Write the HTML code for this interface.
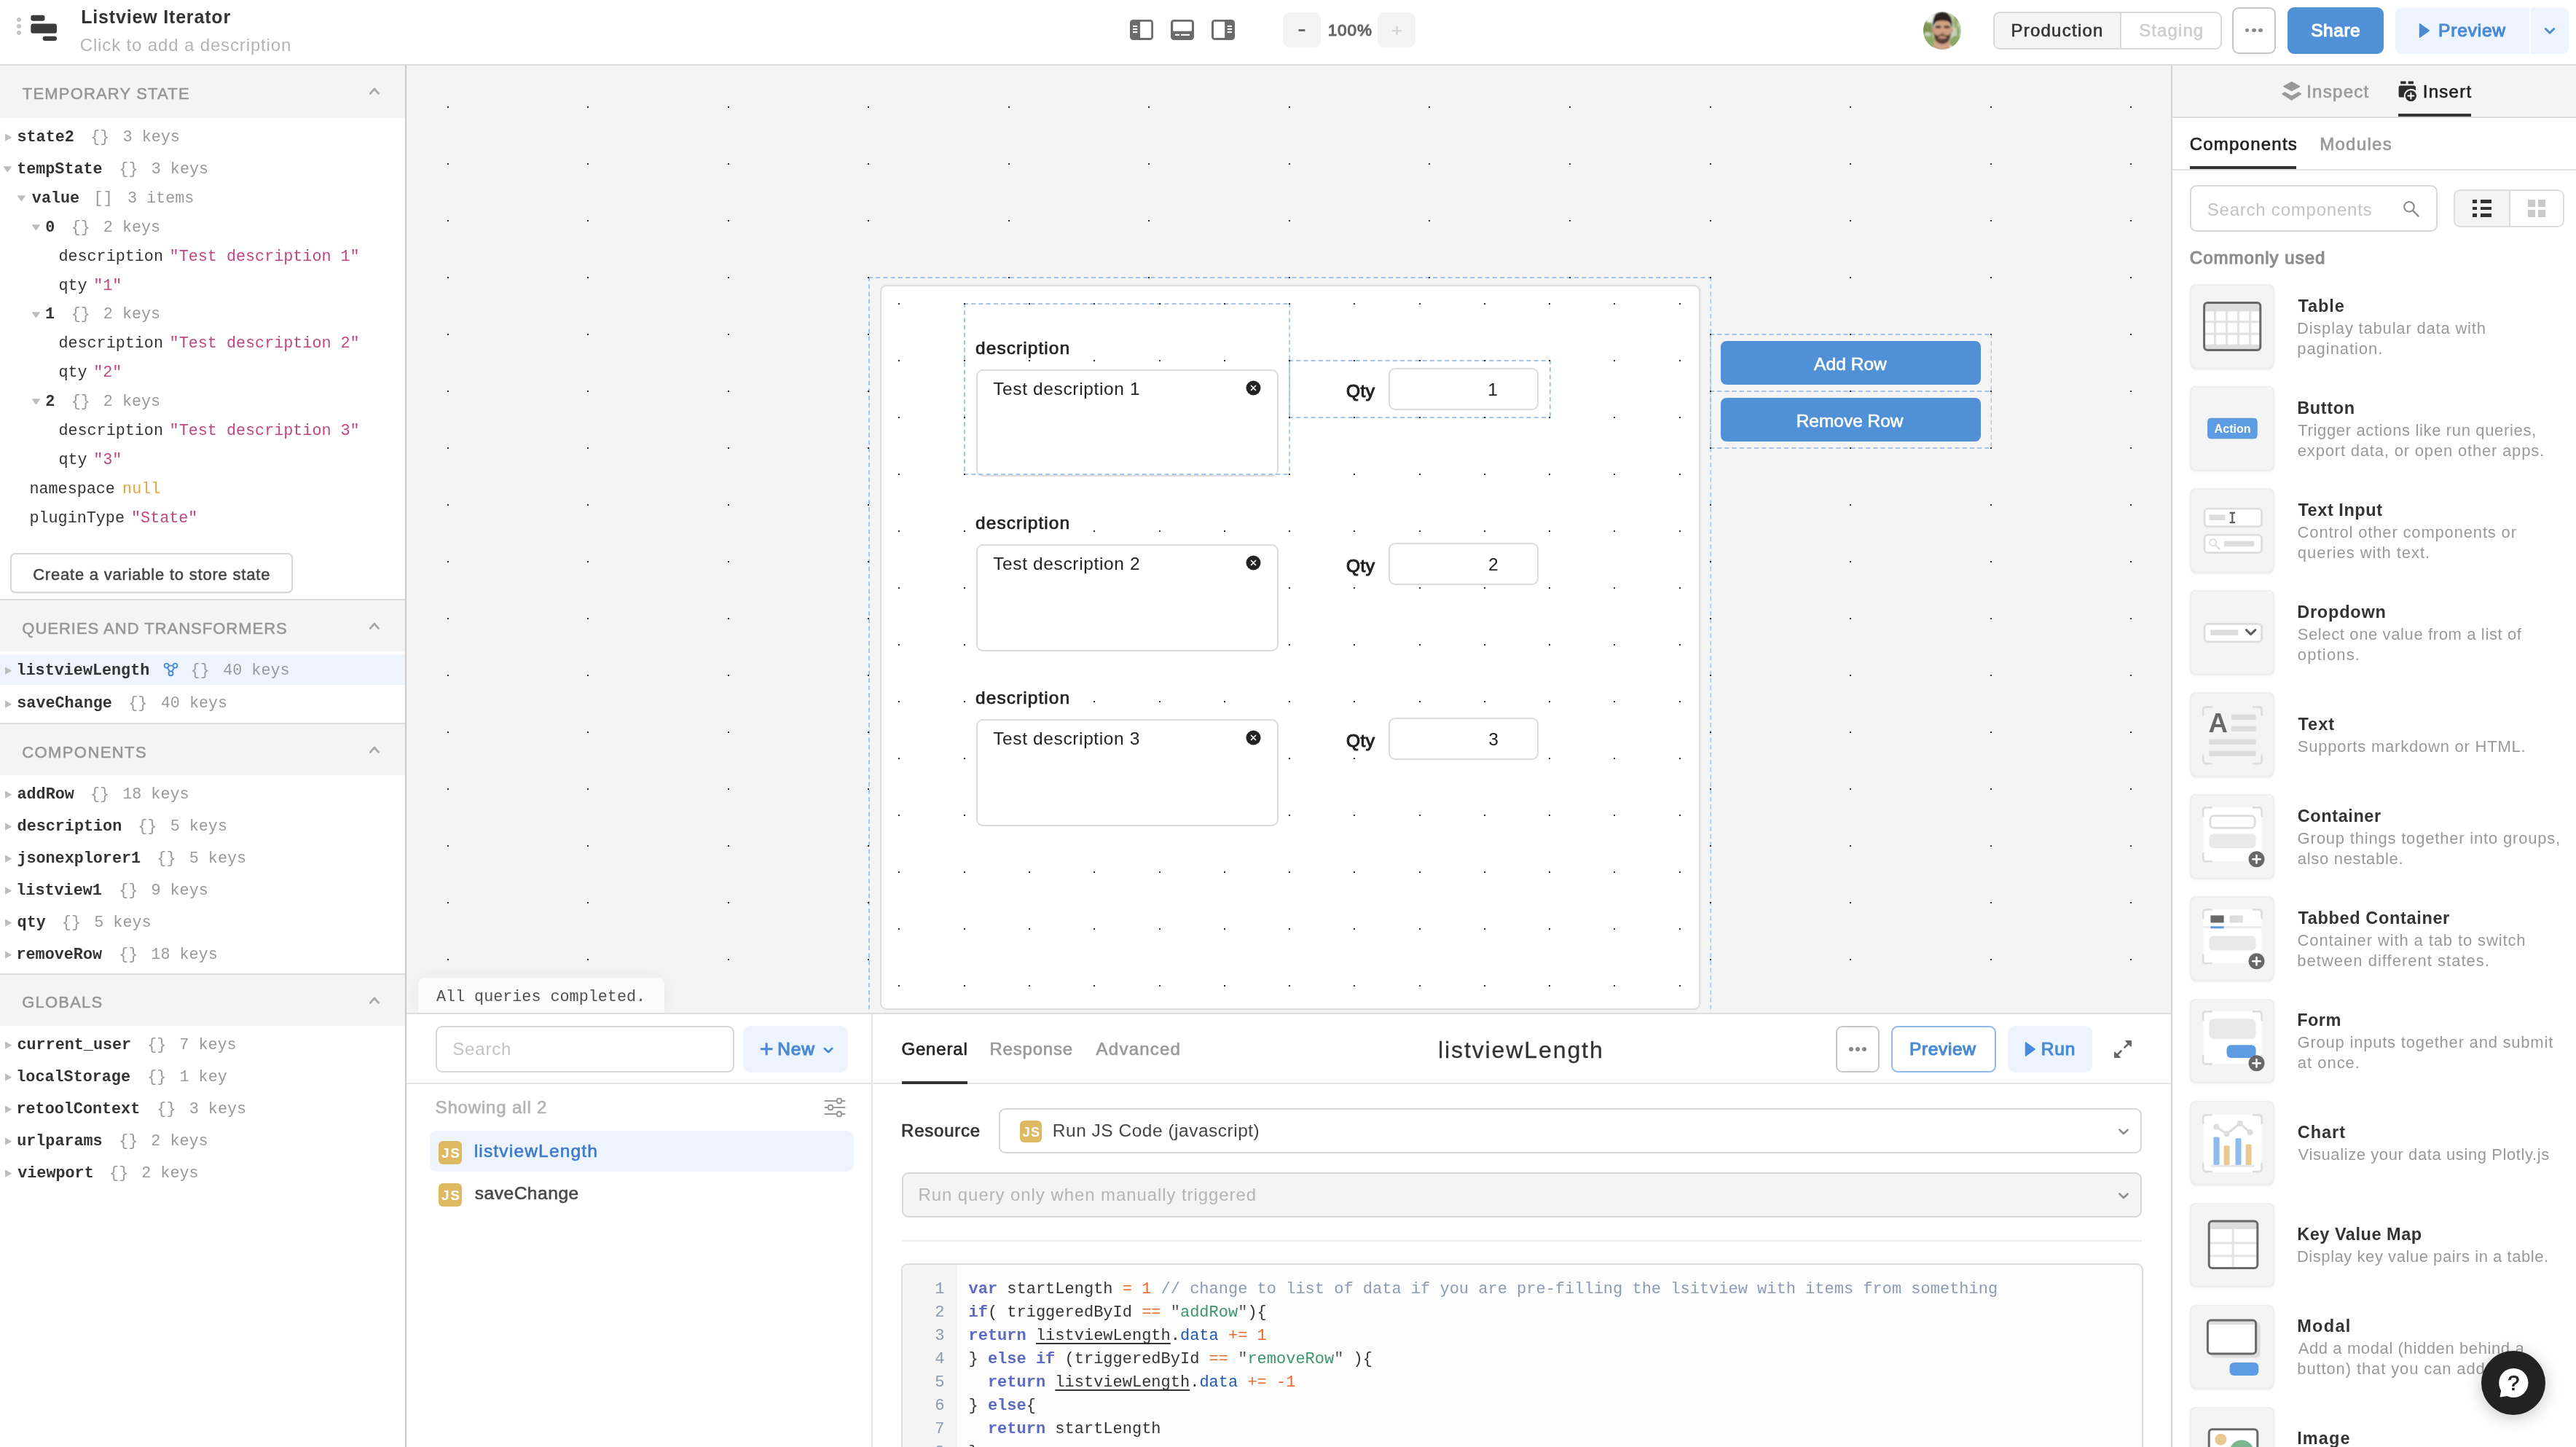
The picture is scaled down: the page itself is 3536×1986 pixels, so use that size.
<!DOCTYPE html>
<html lang="en"><head><meta charset="utf-8"><title>Listview Iterator</title><style>html,body{margin:0;padding:0;background:#fff}
body{width:3536px;height:1986px;overflow:hidden;position:relative;will-change:transform;font-family:"Liberation Sans",sans-serif}
.b{position:absolute;display:block;box-sizing:content-box}
.t{position:absolute;white-space:pre;display:block}
.s{font-family:"Liberation Sans",sans-serif}
.m{font-family:"Liberation Mono",monospace}
div.b{box-sizing:border-box}
</style></head><body>
<div class="b" style="left:0px;top:0px;width:3536px;height:88px;background:#fff;"></div>
<div class="b" style="left:0px;top:88px;width:3536px;height:2px;background:#dcdcdc;"></div>
<div class="b" style="left:558px;top:90px;width:2422px;height:1300px;background:#f4f4f4;"></div>
<div class="b" style="left:0px;top:90px;width:556px;height:1896px;background:#fff;"></div>
<div class="b" style="left:556px;top:90px;width:2px;height:1896px;background:#c9c9c9;"></div>
<div class="b" style="left:2982px;top:90px;width:554px;height:1896px;background:#fff;"></div>
<div class="b" style="left:2980px;top:90px;width:2px;height:1896px;background:#d2d2d2;"></div>
<div class="b" style="left:22.8px;top:24px;width:6px;height:6px;background:#c4c4c4;border-radius:3px;"></div>
<div class="b" style="left:22.8px;top:33px;width:6px;height:6px;background:#c4c4c4;border-radius:3px;"></div>
<div class="b" style="left:22.8px;top:41.6px;width:6px;height:6px;background:#c4c4c4;border-radius:3px;"></div>
<svg class="b" style="left:40px;top:18px;" width="42" height="40" viewBox="0 0 42 40"><rect x="2.3" y="2.7" width="19.2" height="8" rx="3.2" fill="#3c3c3c"/><rect x="2.3" y="14.4" width="35.7" height="13.4" rx="3.4" fill="#3c3c3c"/><rect x="18.7" y="31.8" width="19.3" height="6.1" rx="3" fill="#3c3c3c"/></svg>
<span class="t s" style="left:111.17px;top:8.70px;font-size:25px;line-height:28px;color:#333;font-weight:700;letter-spacing:0.828px;">Listview Iterator</span>
<span class="t s" style="left:109.70px;top:48.00px;font-size:24px;line-height:27px;color:#b4b4b4;letter-spacing:0.862px;">Click to add a description</span>
<svg class="b" style="left:1551px;top:27px;" width="32" height="28" viewBox="0 0 32 28"><rect width="32" height="28" rx="4.5" fill="#6b6b6b"/><rect x="14" y="2.7" width="15.2" height="22.4" rx="1" fill="#fff"/><rect x="4" y="8" width="6.2" height="2.1" fill="#fff"/><rect x="4" y="12" width="6.2" height="2.1" fill="#fff"/><rect x="4" y="16" width="6.2" height="2.1" fill="#fff"/></svg>
<svg class="b" style="left:1607px;top:27px;" width="32" height="28" viewBox="0 0 32 28"><rect width="32" height="28" rx="4.5" fill="#6b6b6b"/><rect x="3.2" y="2.7" width="25.7" height="13" rx="1" fill="#fff"/><rect x="6" y="19.8" width="6" height="2.1" fill="#fff"/><rect x="14" y="19.8" width="12" height="2.1" fill="#fff"/></svg>
<svg class="b" style="left:1663px;top:27px;" width="32" height="28" viewBox="0 0 32 28"><rect width="32" height="28" rx="4.5" fill="#6b6b6b"/><rect x="3" y="2.7" width="15.2" height="22.4" rx="1" fill="#fff"/><rect x="21.8" y="8" width="6.2" height="2.1" fill="#fff"/><rect x="21.8" y="12" width="6.2" height="2.1" fill="#fff"/><rect x="21.8" y="16" width="6.2" height="2.1" fill="#fff"/></svg>
<div class="b" style="left:1761px;top:17px;width:52px;height:48px;background:#f4f4f4;border-radius:9px;"></div>
<div class="b" style="left:1891px;top:17px;width:52px;height:48px;background:#f4f4f4;border-radius:9px;"></div>
<span class="t s" style="left:1780.88px;top:17.50px;font-size:36px;line-height:41px;color:#666;">-</span>
<span class="t s" style="left:1822.66px;top:28.50px;font-size:22.5px;line-height:25px;color:#666;letter-spacing:0.925px;-webkit-text-stroke:1.1px #666;">100%</span>
<span class="t s" style="left:1910.15px;top:27.65px;font-size:24.5px;line-height:27px;color:#d4d4d4;-webkit-text-stroke:0.5px #d4d4d4;">+</span>
<svg class="b" style="left:2640px;top:16px;" width="52" height="52" viewBox="0 0 52 52"><defs><clipPath id="av"><circle cx="26" cy="26" r="26"/></clipPath><filter id="bl" x="-10%" y="-10%" width="120%" height="120%"><feGaussianBlur stdDeviation="0.85"/></filter></defs><g clip-path="url(#av)"><rect width="52" height="52" fill="#e3e9dc"/><g filter="url(#bl)"><path d="M-3 13 Q6 9 12 16 L15 54 L-3 54Z" fill="#8ba35f"/><ellipse cx="5" cy="24" rx="8" ry="7" fill="#7c9552"/><ellipse cx="6" cy="31" rx="5" ry="3" fill="#c9d3bd"/><ellipse cx="9" cy="9" rx="7" ry="6" fill="#f1f4ee"/><ellipse cx="8" cy="42" rx="10" ry="8" fill="#93aa68"/><path d="M36 2 Q48 6 53 20 L53 54 L36 54Z" fill="#c5d2b1"/><ellipse cx="46" cy="43" rx="10" ry="10" fill="#8aa565"/><ellipse cx="44.5" cy="14" rx="3.6" ry="9" fill="#9bb074"/><ellipse cx="48" cy="27" rx="2" ry="7" fill="#8aa565"/><path d="M16 38 L36 38 L38.5 53 L12.5 53Z" fill="#d3a386"/><path d="M36.4 45.5 L43 50 L43 53 L37.6 53Z" fill="#f4f4f4"/><ellipse cx="26.2" cy="27" rx="12.3" ry="16.6" fill="#cf9f83"/><ellipse cx="13.5" cy="25.6" rx="1.6" ry="3.2" fill="#c79176"/><ellipse cx="39" cy="25.6" rx="1.6" ry="3.2" fill="#c79176"/><path d="M13.4 23 Q11.4 6 20 2 Q27 -1.2 33 2.4 Q41.2 7 39.2 23 Q37.6 15.4 33.5 13.2 Q26 11 18.5 13.6 Q14.6 16 13.4 23Z" fill="#2a211d"/><path d="M14.6 28.6 Q17 33 20.4 32.4 Q26.2 30 32 32.4 Q35.6 33 37.7 28.6 Q38.2 38 32.6 42.6 Q26.2 46.6 19.8 42.6 Q14.2 38 14.6 28.6Z" fill="#4b362c" opacity="0.9"/><ellipse cx="26.2" cy="35.2" rx="5.6" ry="2.3" fill="#bd8a76"/><ellipse cx="20.5" cy="21" rx="4.3" ry="1.8" fill="#4a3228"/><ellipse cx="32.5" cy="21" rx="4.3" ry="1.8" fill="#4a3228"/><ellipse cx="26.4" cy="29.7" rx="2.7" ry="1.2" fill="#a77560"/></g></g></svg>
<div class="b" style="left:2736px;top:16px;width:314px;height:52px;background:#fff;border:2px solid #d9d9d9;border-radius:9px;"></div>
<div class="b" style="left:2738px;top:18px;width:173px;height:48px;background:#f4f4f4;border-radius:7px;border-radius:7px 0 0 7px;"></div>
<div class="b" style="left:2910px;top:18px;width:2px;height:48px;background:#d9d9d9;"></div>
<span class="t s" style="left:2760.38px;top:28.00px;font-size:24px;line-height:27px;color:#333;letter-spacing:1.260px;-webkit-text-stroke:0.6px #333;">Production</span>
<span class="t s" style="left:2936.22px;top:28.00px;font-size:24px;line-height:27px;color:#cdcdcd;letter-spacing:1.093px;-webkit-text-stroke:0.6px #cdcdcd;">Staging</span>
<div class="b" style="left:3064px;top:10px;width:60px;height:64px;background:#fff;border:2px solid #c6c6c6;border-radius:9px;"></div>
<div class="b" style="left:3081.8999999999996px;top:38.900000000000006px;width:5.6px;height:5.6px;background:#8a8a8a;border-radius:3px;"></div>
<div class="b" style="left:3091.1px;top:38.900000000000006px;width:5.6px;height:5.6px;background:#8a8a8a;border-radius:3px;"></div>
<div class="b" style="left:3100.3999999999996px;top:38.900000000000006px;width:5.6px;height:5.6px;background:#8a8a8a;border-radius:3px;"></div>
<div class="b" style="left:3140px;top:10px;width:132px;height:64px;background:#5090d7;border-radius:9px;"></div>
<span class="t s" style="left:3172.27px;top:28.00px;font-size:24.5px;line-height:27px;color:#fff;letter-spacing:0.510px;-webkit-text-stroke:1.15px #fff;">Share</span>
<div class="b" style="left:3288px;top:10px;width:184px;height:64px;background:#eef4fd;border-radius:9px 0 0 9px;"></div>
<div class="b" style="left:3474px;top:10px;width:52px;height:64px;background:#eef4fd;border-radius:0 9px 9px 0;"></div>
<svg class="b" style="left:3320px;top:31px;" width="16" height="22" viewBox="0 0 16 22"><path d="M2 1.2 L14.6 10.3 Q15.6 11 14.6 11.7 L2 20.8 Q0.8 21.4 0.8 20 V2 Q0.8 0.6 2 1.2Z" fill="#4a8ad4"/></svg>
<span class="t s" style="left:3347.11px;top:28.00px;font-size:24.5px;line-height:27px;color:#4a8ad4;letter-spacing:0.798px;-webkit-text-stroke:1.15px #4a8ad4;">Preview</span>
<svg class="b" style="left:3491px;top:36.6px;" width="18" height="12" viewBox="0 0 18 12"><path d="M3.2 2.6 L9 8.2 L14.8 2.6" fill="none" stroke="#4a8ad4" stroke-width="2.8" stroke-linecap="round" stroke-linejoin="round"/></svg>
<div class="b" style="left:0px;top:90px;width:556px;height:72px;background:#f4f4f4;"></div>
<span class="t s" style="left:30.83px;top:115.80px;font-size:22px;line-height:25px;color:#969696;letter-spacing:1.176px;-webkit-text-stroke:0.55px #969696;">TEMPORARY STATE</span>
<svg class="b" style="left:504px;top:118.3px;" width="20" height="14" viewBox="0 0 20 14"><path d="M4.3 10.4 L9.9 4 L15.5 10.4" fill="none" stroke="#a6a6a6" stroke-width="2.7" stroke-linecap="round" stroke-linejoin="round"/></svg>
<svg class="b" style="left:6.0px;top:182.20000000000002px;" width="12.1" height="13.2" viewBox="0 0 12.1 13.2"><path d="M1.6 1.7 L8.4 5.4 Q9.2 6 8.4 6.6 L1.6 10.3 Q0.9 10.6 0.9 9.8 V2.2 Q0.9 1.4 1.6 1.7Z" fill="#bdbdbd" transform="scale(1.1)"/></svg>
<span class="t m" style="left:23.50px;top:175.80px;font-size:21.75px;line-height:25px;color:#333;font-weight:700;">state2</span>
<span class="t m" style="left:124.21px;top:175.80px;font-size:21.75px;line-height:25px;color:#999;">{}</span>
<span class="t m" style="left:168.59px;top:175.80px;font-size:21.75px;line-height:25px;color:#999;">3 keys</span>
<svg class="b" style="left:4.0px;top:227.4px;" width="13.2" height="11" viewBox="0 0 13.2 11"><path d="M1.4 1.2 H10.2 Q11.2 1.2 10.6 2 L6.4 7.9 Q5.8 8.6 5.2 7.9 L1 2 Q0.4 1.2 1.4 1.2Z" fill="#bdbdbd" transform="scale(1.1)"/></svg>
<span class="t m" style="left:23.17px;top:220.00px;font-size:21.75px;line-height:25px;color:#333;font-weight:700;">tempState</span>
<span class="t m" style="left:163.36px;top:220.00px;font-size:21.75px;line-height:25px;color:#999;">{}</span>
<span class="t m" style="left:207.75px;top:220.00px;font-size:21.75px;line-height:25px;color:#999;">3 keys</span>
<svg class="b" style="left:23.400000000000002px;top:267.28px;" width="13.2" height="11" viewBox="0 0 13.2 11"><path d="M1.4 1.2 H10.2 Q11.2 1.2 10.6 2 L6.4 7.9 Q5.8 8.6 5.2 7.9 L1 2 Q0.4 1.2 1.4 1.2Z" fill="#bdbdbd" transform="scale(1.1)"/></svg>
<span class="t m" style="left:43.87px;top:259.88px;font-size:21.75px;line-height:25px;color:#333;font-weight:700;">value</span>
<span class="t m" style="left:128.60px;top:259.88px;font-size:21.75px;line-height:25px;color:#999;">[]</span>
<span class="t m" style="left:174.94px;top:259.88px;font-size:21.75px;line-height:25px;color:#999;">3 items</span>
<svg class="b" style="left:42.7px;top:307.15999999999997px;" width="13.2" height="11" viewBox="0 0 13.2 11"><path d="M1.4 1.2 H10.2 Q11.2 1.2 10.6 2 L6.4 7.9 Q5.8 8.6 5.2 7.9 L1 2 Q0.4 1.2 1.4 1.2Z" fill="#bdbdbd" transform="scale(1.1)"/></svg>
<span class="t m" style="left:62.30px;top:299.76px;font-size:21.75px;line-height:25px;color:#333;font-weight:700;">0</span>
<span class="t m" style="left:97.66px;top:299.76px;font-size:21.75px;line-height:25px;color:#999;">{}</span>
<span class="t m" style="left:141.83px;top:299.76px;font-size:21.75px;line-height:25px;color:#999;">2 keys</span>
<span class="t m" style="left:80.39px;top:339.64px;font-size:21.75px;line-height:25px;color:#333;">description</span>
<span class="t m" style="left:232.61px;top:339.64px;font-size:21.75px;line-height:25px;color:#bf4682;">"Test description 1"</span>
<span class="t m" style="left:80.39px;top:379.52px;font-size:21.75px;line-height:25px;color:#333;">qty</span>
<span class="t m" style="left:128.21px;top:379.52px;font-size:21.75px;line-height:25px;color:#bf4682;">"1"</span>
<svg class="b" style="left:42.7px;top:426.79999999999995px;" width="13.2" height="11" viewBox="0 0 13.2 11"><path d="M1.4 1.2 H10.2 Q11.2 1.2 10.6 2 L6.4 7.9 Q5.8 8.6 5.2 7.9 L1 2 Q0.4 1.2 1.4 1.2Z" fill="#bdbdbd" transform="scale(1.1)"/></svg>
<span class="t m" style="left:62.09px;top:419.40px;font-size:21.75px;line-height:25px;color:#333;font-weight:700;">1</span>
<span class="t m" style="left:97.66px;top:419.40px;font-size:21.75px;line-height:25px;color:#999;">{}</span>
<span class="t m" style="left:141.83px;top:419.40px;font-size:21.75px;line-height:25px;color:#999;">2 keys</span>
<span class="t m" style="left:80.39px;top:459.28px;font-size:21.75px;line-height:25px;color:#333;">description</span>
<span class="t m" style="left:232.61px;top:459.28px;font-size:21.75px;line-height:25px;color:#bf4682;">"Test description 2"</span>
<span class="t m" style="left:80.39px;top:499.16px;font-size:21.75px;line-height:25px;color:#333;">qty</span>
<span class="t m" style="left:128.21px;top:499.16px;font-size:21.75px;line-height:25px;color:#bf4682;">"2"</span>
<svg class="b" style="left:42.7px;top:546.4399999999999px;" width="13.2" height="11" viewBox="0 0 13.2 11"><path d="M1.4 1.2 H10.2 Q11.2 1.2 10.6 2 L6.4 7.9 Q5.8 8.6 5.2 7.9 L1 2 Q0.4 1.2 1.4 1.2Z" fill="#bdbdbd" transform="scale(1.1)"/></svg>
<span class="t m" style="left:62.20px;top:539.04px;font-size:21.75px;line-height:25px;color:#333;font-weight:700;">2</span>
<span class="t m" style="left:97.66px;top:539.04px;font-size:21.75px;line-height:25px;color:#999;">{}</span>
<span class="t m" style="left:141.83px;top:539.04px;font-size:21.75px;line-height:25px;color:#999;">2 keys</span>
<span class="t m" style="left:80.39px;top:578.92px;font-size:21.75px;line-height:25px;color:#333;">description</span>
<span class="t m" style="left:232.61px;top:578.92px;font-size:21.75px;line-height:25px;color:#bf4682;">"Test description 3"</span>
<span class="t m" style="left:80.39px;top:618.80px;font-size:21.75px;line-height:25px;color:#333;">qty</span>
<span class="t m" style="left:128.21px;top:618.80px;font-size:21.75px;line-height:25px;color:#bf4682;">"3"</span>
<span class="t m" style="left:40.45px;top:658.68px;font-size:21.75px;line-height:25px;color:#333;">namespace</span>
<span class="t m" style="left:168.10px;top:658.68px;font-size:21.75px;line-height:25px;color:#e0a63a;">null</span>
<span class="t m" style="left:40.45px;top:698.56px;font-size:21.75px;line-height:25px;color:#333;">pluginType</span>
<span class="t m" style="left:180.06px;top:698.56px;font-size:21.75px;line-height:25px;color:#bf4682;">"State"</span>
<div class="b" style="left:14px;top:759px;width:388px;height:55px;background:#fff;border:2px solid #d6d6d6;border-radius:7px;box-shadow:0 1px 2px rgba(0,0,0,.06);"></div>
<span class="t s" style="left:45.15px;top:776.30px;font-size:22px;line-height:25px;color:#444;letter-spacing:0.788px;-webkit-text-stroke:0.5px #444;">Create a variable to store state</span>
<div class="b" style="left:0px;top:822px;width:556px;height:2px;background:#dedede;"></div>
<div class="b" style="left:0px;top:824px;width:556px;height:69.5px;background:#f4f4f4;"></div>
<span class="t s" style="left:30.29px;top:850.20px;font-size:22px;line-height:25px;color:#969696;letter-spacing:0.990px;-webkit-text-stroke:0.55px #969696;">QUERIES AND TRANSFORMERS</span>
<svg class="b" style="left:504px;top:852px;" width="20" height="14" viewBox="0 0 20 14"><path d="M4.3 10.4 L9.9 4 L15.5 10.4" fill="none" stroke="#a6a6a6" stroke-width="2.7" stroke-linecap="round" stroke-linejoin="round"/></svg>
<div class="b" style="left:0px;top:898px;width:556px;height:42px;background:#eef4fd;"></div>
<svg class="b" style="left:6.0px;top:914.1px;" width="12.1" height="13.2" viewBox="0 0 12.1 13.2"><path d="M1.6 1.7 L8.4 5.4 Q9.2 6 8.4 6.6 L1.6 10.3 Q0.9 10.6 0.9 9.8 V2.2 Q0.9 1.4 1.6 1.7Z" fill="#bdbdbd" transform="scale(1.1)"/></svg>
<span class="t m" style="left:22.52px;top:907.70px;font-size:21.75px;line-height:25px;color:#333;font-weight:700;">listviewLength</span>
<svg class="b" style="left:224.00000000000003px;top:908.7px;" width="22" height="20" viewBox="0 0 22 20"><g fill="none" stroke="#4a8ad4" stroke-width="1.9"><circle cx="4.6" cy="4.6" r="3"/><circle cx="16.4" cy="4.6" r="3"/><circle cx="10.5" cy="15.2" r="3"/><path d="M7.6 4.6H13.4M5.8 7.4 L9 12.6M15.2 7.4 L12 12.6" /></g></svg>
<span class="t m" style="left:261.61px;top:907.70px;font-size:21.75px;line-height:25px;color:#999;">{}</span>
<span class="t m" style="left:306.21px;top:907.70px;font-size:21.75px;line-height:25px;color:#999;">40 keys</span>
<svg class="b" style="left:5.800000000000001px;top:959.6999999999999px;" width="12.1" height="13.2" viewBox="0 0 12.1 13.2"><path d="M1.6 1.7 L8.4 5.4 Q9.2 6 8.4 6.6 L1.6 10.3 Q0.9 10.6 0.9 9.8 V2.2 Q0.9 1.4 1.6 1.7Z" fill="#bdbdbd" transform="scale(1.1)"/></svg>
<span class="t m" style="left:23.30px;top:953.30px;font-size:21.75px;line-height:25px;color:#333;font-weight:700;">saveChange</span>
<span class="t m" style="left:176.21px;top:953.30px;font-size:21.75px;line-height:25px;color:#999;">{}</span>
<span class="t m" style="left:220.81px;top:953.30px;font-size:21.75px;line-height:25px;color:#999;">40 keys</span>
<div class="b" style="left:0px;top:992px;width:556px;height:2px;background:#dedede;"></div>
<div class="b" style="left:0px;top:994px;width:556px;height:69.5px;background:#f4f4f4;"></div>
<span class="t s" style="left:30.17px;top:1019.70px;font-size:22px;line-height:25px;color:#969696;letter-spacing:1.422px;-webkit-text-stroke:0.55px #969696;">COMPONENTS</span>
<svg class="b" style="left:504px;top:1022px;" width="20" height="14" viewBox="0 0 20 14"><path d="M4.3 10.4 L9.9 4 L15.5 10.4" fill="none" stroke="#a6a6a6" stroke-width="2.7" stroke-linecap="round" stroke-linejoin="round"/></svg>
<svg class="b" style="left:5.800000000000001px;top:1083.9px;" width="12.1" height="13.2" viewBox="0 0 12.1 13.2"><path d="M1.6 1.7 L8.4 5.4 Q9.2 6 8.4 6.6 L1.6 10.3 Q0.9 10.6 0.9 9.8 V2.2 Q0.9 1.4 1.6 1.7Z" fill="#bdbdbd" transform="scale(1.1)"/></svg>
<span class="t m" style="left:23.51px;top:1077.50px;font-size:21.75px;line-height:25px;color:#333;font-weight:700;">addRow</span>
<span class="t m" style="left:124.01px;top:1077.50px;font-size:21.75px;line-height:25px;color:#999;">{}</span>
<span class="t m" style="left:168.18px;top:1077.50px;font-size:21.75px;line-height:25px;color:#999;">18 keys</span>
<svg class="b" style="left:5.800000000000001px;top:1127.98px;" width="12.1" height="13.2" viewBox="0 0 12.1 13.2"><path d="M1.6 1.7 L8.4 5.4 Q9.2 6 8.4 6.6 L1.6 10.3 Q0.9 10.6 0.9 9.8 V2.2 Q0.9 1.4 1.6 1.7Z" fill="#bdbdbd" transform="scale(1.1)"/></svg>
<span class="t m" style="left:23.62px;top:1121.58px;font-size:21.75px;line-height:25px;color:#333;font-weight:700;">description</span>
<span class="t m" style="left:189.26px;top:1121.58px;font-size:21.75px;line-height:25px;color:#999;">{}</span>
<span class="t m" style="left:233.64px;top:1121.58px;font-size:21.75px;line-height:25px;color:#999;">5 keys</span>
<svg class="b" style="left:5.800000000000001px;top:1172.0600000000002px;" width="12.1" height="13.2" viewBox="0 0 12.1 13.2"><path d="M1.6 1.7 L8.4 5.4 Q9.2 6 8.4 6.6 L1.6 10.3 Q0.9 10.6 0.9 9.8 V2.2 Q0.9 1.4 1.6 1.7Z" fill="#bdbdbd" transform="scale(1.1)"/></svg>
<span class="t m" style="left:23.40px;top:1165.66px;font-size:21.75px;line-height:25px;color:#333;font-weight:700;">jsonexplorer1</span>
<span class="t m" style="left:215.36px;top:1165.66px;font-size:21.75px;line-height:25px;color:#999;">{}</span>
<span class="t m" style="left:259.75px;top:1165.66px;font-size:21.75px;line-height:25px;color:#999;">5 keys</span>
<svg class="b" style="left:5.800000000000001px;top:1216.14px;" width="12.1" height="13.2" viewBox="0 0 12.1 13.2"><path d="M1.6 1.7 L8.4 5.4 Q9.2 6 8.4 6.6 L1.6 10.3 Q0.9 10.6 0.9 9.8 V2.2 Q0.9 1.4 1.6 1.7Z" fill="#bdbdbd" transform="scale(1.1)"/></svg>
<span class="t m" style="left:22.32px;top:1209.74px;font-size:21.75px;line-height:25px;color:#333;font-weight:700;">listview1</span>
<span class="t m" style="left:163.16px;top:1209.74px;font-size:21.75px;line-height:25px;color:#999;">{}</span>
<span class="t m" style="left:207.44px;top:1209.74px;font-size:21.75px;line-height:25px;color:#999;">9 keys</span>
<svg class="b" style="left:5.800000000000001px;top:1260.22px;" width="12.1" height="13.2" viewBox="0 0 12.1 13.2"><path d="M1.6 1.7 L8.4 5.4 Q9.2 6 8.4 6.6 L1.6 10.3 Q0.9 10.6 0.9 9.8 V2.2 Q0.9 1.4 1.6 1.7Z" fill="#bdbdbd" transform="scale(1.1)"/></svg>
<span class="t m" style="left:23.62px;top:1253.82px;font-size:21.75px;line-height:25px;color:#333;font-weight:700;">qty</span>
<span class="t m" style="left:84.86px;top:1253.82px;font-size:21.75px;line-height:25px;color:#999;">{}</span>
<span class="t m" style="left:129.25px;top:1253.82px;font-size:21.75px;line-height:25px;color:#999;">5 keys</span>
<svg class="b" style="left:5.800000000000001px;top:1304.3000000000002px;" width="12.1" height="13.2" viewBox="0 0 12.1 13.2"><path d="M1.6 1.7 L8.4 5.4 Q9.2 6 8.4 6.6 L1.6 10.3 Q0.9 10.6 0.9 9.8 V2.2 Q0.9 1.4 1.6 1.7Z" fill="#bdbdbd" transform="scale(1.1)"/></svg>
<span class="t m" style="left:22.53px;top:1297.90px;font-size:21.75px;line-height:25px;color:#333;font-weight:700;">removeRow</span>
<span class="t m" style="left:163.16px;top:1297.90px;font-size:21.75px;line-height:25px;color:#999;">{}</span>
<span class="t m" style="left:207.33px;top:1297.90px;font-size:21.75px;line-height:25px;color:#999;">18 keys</span>
<div class="b" style="left:0px;top:1336px;width:556px;height:2px;background:#dedede;"></div>
<div class="b" style="left:0px;top:1338px;width:556px;height:69.7px;background:#f4f4f4;"></div>
<span class="t s" style="left:30.17px;top:1363.40px;font-size:22px;line-height:25px;color:#969696;letter-spacing:1.217px;-webkit-text-stroke:0.55px #969696;">GLOBALS</span>
<svg class="b" style="left:504px;top:1365.5px;" width="20" height="14" viewBox="0 0 20 14"><path d="M4.3 10.4 L9.9 4 L15.5 10.4" fill="none" stroke="#a6a6a6" stroke-width="2.7" stroke-linecap="round" stroke-linejoin="round"/></svg>
<svg class="b" style="left:5.800000000000001px;top:1428.1000000000001px;" width="12.1" height="13.2" viewBox="0 0 12.1 13.2"><path d="M1.6 1.7 L8.4 5.4 Q9.2 6 8.4 6.6 L1.6 10.3 Q0.9 10.6 0.9 9.8 V2.2 Q0.9 1.4 1.6 1.7Z" fill="#bdbdbd" transform="scale(1.1)"/></svg>
<span class="t m" style="left:23.51px;top:1421.70px;font-size:21.75px;line-height:25px;color:#333;font-weight:700;">current_user</span>
<span class="t m" style="left:202.31px;top:1421.70px;font-size:21.75px;line-height:25px;color:#999;">{}</span>
<span class="t m" style="left:246.37px;top:1421.70px;font-size:21.75px;line-height:25px;color:#999;">7 keys</span>
<svg class="b" style="left:5.800000000000001px;top:1472.1000000000001px;" width="12.1" height="13.2" viewBox="0 0 12.1 13.2"><path d="M1.6 1.7 L8.4 5.4 Q9.2 6 8.4 6.6 L1.6 10.3 Q0.9 10.6 0.9 9.8 V2.2 Q0.9 1.4 1.6 1.7Z" fill="#bdbdbd" transform="scale(1.1)"/></svg>
<span class="t m" style="left:22.32px;top:1465.70px;font-size:21.75px;line-height:25px;color:#333;font-weight:700;">localStorage</span>
<span class="t m" style="left:202.31px;top:1465.70px;font-size:21.75px;line-height:25px;color:#999;">{}</span>
<span class="t m" style="left:246.48px;top:1465.70px;font-size:21.75px;line-height:25px;color:#999;">1 key</span>
<svg class="b" style="left:5.800000000000001px;top:1516.1000000000001px;" width="12.1" height="13.2" viewBox="0 0 12.1 13.2"><path d="M1.6 1.7 L8.4 5.4 Q9.2 6 8.4 6.6 L1.6 10.3 Q0.9 10.6 0.9 9.8 V2.2 Q0.9 1.4 1.6 1.7Z" fill="#bdbdbd" transform="scale(1.1)"/></svg>
<span class="t m" style="left:22.53px;top:1509.70px;font-size:21.75px;line-height:25px;color:#333;font-weight:700;">retoolContext</span>
<span class="t m" style="left:215.36px;top:1509.70px;font-size:21.75px;line-height:25px;color:#999;">{}</span>
<span class="t m" style="left:259.75px;top:1509.70px;font-size:21.75px;line-height:25px;color:#999;">3 keys</span>
<svg class="b" style="left:5.800000000000001px;top:1560.1000000000001px;" width="12.1" height="13.2" viewBox="0 0 12.1 13.2"><path d="M1.6 1.7 L8.4 5.4 Q9.2 6 8.4 6.6 L1.6 10.3 Q0.9 10.6 0.9 9.8 V2.2 Q0.9 1.4 1.6 1.7Z" fill="#bdbdbd" transform="scale(1.1)"/></svg>
<span class="t m" style="left:23.19px;top:1553.70px;font-size:21.75px;line-height:25px;color:#333;font-weight:700;">urlparams</span>
<span class="t m" style="left:163.16px;top:1553.70px;font-size:21.75px;line-height:25px;color:#999;">{}</span>
<span class="t m" style="left:207.33px;top:1553.70px;font-size:21.75px;line-height:25px;color:#999;">2 keys</span>
<svg class="b" style="left:5.800000000000001px;top:1604.1000000000001px;" width="12.1" height="13.2" viewBox="0 0 12.1 13.2"><path d="M1.6 1.7 L8.4 5.4 Q9.2 6 8.4 6.6 L1.6 10.3 Q0.9 10.6 0.9 9.8 V2.2 Q0.9 1.4 1.6 1.7Z" fill="#bdbdbd" transform="scale(1.1)"/></svg>
<span class="t m" style="left:24.27px;top:1597.70px;font-size:21.75px;line-height:25px;color:#333;font-weight:700;">viewport</span>
<span class="t m" style="left:150.11px;top:1597.70px;font-size:21.75px;line-height:25px;color:#999;">{}</span>
<span class="t m" style="left:194.28px;top:1597.70px;font-size:21.75px;line-height:25px;color:#999;">2 keys</span>
<div class="b" style="left:614px;top:146px;width:2px;height:2px;background:#2e2e2e;box-shadow:0px 0px #2e2e2e,192px 0px #2e2e2e,385px 0px #2e2e2e,577px 0px #2e2e2e,770px 0px #2e2e2e,962px 0px #2e2e2e,1155px 0px #2e2e2e,1347px 0px #2e2e2e,1540px 0px #2e2e2e,1733px 0px #2e2e2e,1925px 0px #2e2e2e,2118px 0px #2e2e2e,2310px 0px #2e2e2e,0px 78px #2e2e2e,192px 78px #2e2e2e,385px 78px #2e2e2e,577px 78px #2e2e2e,770px 78px #2e2e2e,962px 78px #2e2e2e,1155px 78px #2e2e2e,1347px 78px #2e2e2e,1540px 78px #2e2e2e,1733px 78px #2e2e2e,1925px 78px #2e2e2e,2118px 78px #2e2e2e,2310px 78px #2e2e2e,0px 156px #2e2e2e,192px 156px #2e2e2e,385px 156px #2e2e2e,577px 156px #2e2e2e,770px 156px #2e2e2e,962px 156px #2e2e2e,1155px 156px #2e2e2e,1347px 156px #2e2e2e,1540px 156px #2e2e2e,1733px 156px #2e2e2e,1925px 156px #2e2e2e,2118px 156px #2e2e2e,2310px 156px #2e2e2e,0px 234px #2e2e2e,192px 234px #2e2e2e,385px 234px #2e2e2e,577px 234px #2e2e2e,770px 234px #2e2e2e,962px 234px #2e2e2e,1155px 234px #2e2e2e,1347px 234px #2e2e2e,1540px 234px #2e2e2e,1733px 234px #2e2e2e,1925px 234px #2e2e2e,2118px 234px #2e2e2e,2310px 234px #2e2e2e,0px 312px #2e2e2e,192px 312px #2e2e2e,385px 312px #2e2e2e,577px 312px #2e2e2e,770px 312px #2e2e2e,962px 312px #2e2e2e,1155px 312px #2e2e2e,1347px 312px #2e2e2e,1540px 312px #2e2e2e,1733px 312px #2e2e2e,1925px 312px #2e2e2e,2118px 312px #2e2e2e,2310px 312px #2e2e2e,0px 390px #2e2e2e,192px 390px #2e2e2e,385px 390px #2e2e2e,577px 390px #2e2e2e,770px 390px #2e2e2e,962px 390px #2e2e2e,1155px 390px #2e2e2e,1347px 390px #2e2e2e,1540px 390px #2e2e2e,1733px 390px #2e2e2e,1925px 390px #2e2e2e,2118px 390px #2e2e2e,2310px 390px #2e2e2e,0px 468px #2e2e2e,192px 468px #2e2e2e,385px 468px #2e2e2e,577px 468px #2e2e2e,770px 468px #2e2e2e,962px 468px #2e2e2e,1155px 468px #2e2e2e,1347px 468px #2e2e2e,1540px 468px #2e2e2e,1733px 468px #2e2e2e,1925px 468px #2e2e2e,2118px 468px #2e2e2e,2310px 468px #2e2e2e,0px 546px #2e2e2e,192px 546px #2e2e2e,385px 546px #2e2e2e,577px 546px #2e2e2e,770px 546px #2e2e2e,962px 546px #2e2e2e,1155px 546px #2e2e2e,1347px 546px #2e2e2e,1540px 546px #2e2e2e,1733px 546px #2e2e2e,1925px 546px #2e2e2e,2118px 546px #2e2e2e,2310px 546px #2e2e2e,0px 624px #2e2e2e,192px 624px #2e2e2e,385px 624px #2e2e2e,577px 624px #2e2e2e,770px 624px #2e2e2e,962px 624px #2e2e2e,1155px 624px #2e2e2e,1347px 624px #2e2e2e,1540px 624px #2e2e2e,1733px 624px #2e2e2e,1925px 624px #2e2e2e,2118px 624px #2e2e2e,2310px 624px #2e2e2e,0px 702px #2e2e2e,192px 702px #2e2e2e,385px 702px #2e2e2e,577px 702px #2e2e2e,770px 702px #2e2e2e,962px 702px #2e2e2e,1155px 702px #2e2e2e,1347px 702px #2e2e2e,1540px 702px #2e2e2e,1733px 702px #2e2e2e,1925px 702px #2e2e2e,2118px 702px #2e2e2e,2310px 702px #2e2e2e,0px 780px #2e2e2e,192px 780px #2e2e2e,385px 780px #2e2e2e,577px 780px #2e2e2e,770px 780px #2e2e2e,962px 780px #2e2e2e,1155px 780px #2e2e2e,1347px 780px #2e2e2e,1540px 780px #2e2e2e,1733px 780px #2e2e2e,1925px 780px #2e2e2e,2118px 780px #2e2e2e,2310px 780px #2e2e2e,0px 858px #2e2e2e,192px 858px #2e2e2e,385px 858px #2e2e2e,577px 858px #2e2e2e,770px 858px #2e2e2e,962px 858px #2e2e2e,1155px 858px #2e2e2e,1347px 858px #2e2e2e,1540px 858px #2e2e2e,1733px 858px #2e2e2e,1925px 858px #2e2e2e,2118px 858px #2e2e2e,2310px 858px #2e2e2e,0px 936px #2e2e2e,192px 936px #2e2e2e,385px 936px #2e2e2e,577px 936px #2e2e2e,770px 936px #2e2e2e,962px 936px #2e2e2e,1155px 936px #2e2e2e,1347px 936px #2e2e2e,1540px 936px #2e2e2e,1733px 936px #2e2e2e,1925px 936px #2e2e2e,2118px 936px #2e2e2e,2310px 936px #2e2e2e,0px 1014px #2e2e2e,192px 1014px #2e2e2e,385px 1014px #2e2e2e,577px 1014px #2e2e2e,770px 1014px #2e2e2e,962px 1014px #2e2e2e,1155px 1014px #2e2e2e,1347px 1014px #2e2e2e,1540px 1014px #2e2e2e,1733px 1014px #2e2e2e,1925px 1014px #2e2e2e,2118px 1014px #2e2e2e,2310px 1014px #2e2e2e,0px 1092px #2e2e2e,192px 1092px #2e2e2e,385px 1092px #2e2e2e,577px 1092px #2e2e2e,770px 1092px #2e2e2e,962px 1092px #2e2e2e,1155px 1092px #2e2e2e,1347px 1092px #2e2e2e,1540px 1092px #2e2e2e,1733px 1092px #2e2e2e,1925px 1092px #2e2e2e,2118px 1092px #2e2e2e,2310px 1092px #2e2e2e,0px 1170px #2e2e2e,192px 1170px #2e2e2e,385px 1170px #2e2e2e,577px 1170px #2e2e2e,770px 1170px #2e2e2e,962px 1170px #2e2e2e,1155px 1170px #2e2e2e,1347px 1170px #2e2e2e,1540px 1170px #2e2e2e,1733px 1170px #2e2e2e,1925px 1170px #2e2e2e,2118px 1170px #2e2e2e,2310px 1170px #2e2e2e"></div>
<div class="b" style="left:1208px;top:391px;width:1126px;height:995px;background:#fff;border:2px solid #dddddd;border-radius:9px;box-sizing:border-box;box-shadow:1px 0 3px rgba(0,0,0,.04);"></div>
<div class="b" style="left:1233px;top:416px;width:2px;height:2px;background:#2e2e2e;box-shadow:0px 0px #2e2e2e,90px 0px #2e2e2e,179px 0px #2e2e2e,268px 0px #2e2e2e,358px 0px #2e2e2e,447px 0px #2e2e2e,536px 0px #2e2e2e,625px 0px #2e2e2e,715px 0px #2e2e2e,804px 0px #2e2e2e,893px 0px #2e2e2e,982px 0px #2e2e2e,1072px 0px #2e2e2e,0px 78px #2e2e2e,90px 78px #2e2e2e,179px 78px #2e2e2e,268px 78px #2e2e2e,358px 78px #2e2e2e,447px 78px #2e2e2e,536px 78px #2e2e2e,625px 78px #2e2e2e,715px 78px #2e2e2e,804px 78px #2e2e2e,893px 78px #2e2e2e,982px 78px #2e2e2e,1072px 78px #2e2e2e,0px 156px #2e2e2e,90px 156px #2e2e2e,179px 156px #2e2e2e,268px 156px #2e2e2e,358px 156px #2e2e2e,447px 156px #2e2e2e,536px 156px #2e2e2e,625px 156px #2e2e2e,715px 156px #2e2e2e,804px 156px #2e2e2e,893px 156px #2e2e2e,982px 156px #2e2e2e,1072px 156px #2e2e2e,0px 234px #2e2e2e,90px 234px #2e2e2e,179px 234px #2e2e2e,268px 234px #2e2e2e,358px 234px #2e2e2e,447px 234px #2e2e2e,536px 234px #2e2e2e,625px 234px #2e2e2e,715px 234px #2e2e2e,804px 234px #2e2e2e,893px 234px #2e2e2e,982px 234px #2e2e2e,1072px 234px #2e2e2e,0px 312px #2e2e2e,90px 312px #2e2e2e,179px 312px #2e2e2e,268px 312px #2e2e2e,358px 312px #2e2e2e,447px 312px #2e2e2e,536px 312px #2e2e2e,625px 312px #2e2e2e,715px 312px #2e2e2e,804px 312px #2e2e2e,893px 312px #2e2e2e,982px 312px #2e2e2e,1072px 312px #2e2e2e,0px 390px #2e2e2e,90px 390px #2e2e2e,179px 390px #2e2e2e,268px 390px #2e2e2e,358px 390px #2e2e2e,447px 390px #2e2e2e,536px 390px #2e2e2e,625px 390px #2e2e2e,715px 390px #2e2e2e,804px 390px #2e2e2e,893px 390px #2e2e2e,982px 390px #2e2e2e,1072px 390px #2e2e2e,0px 468px #2e2e2e,90px 468px #2e2e2e,179px 468px #2e2e2e,268px 468px #2e2e2e,358px 468px #2e2e2e,447px 468px #2e2e2e,536px 468px #2e2e2e,625px 468px #2e2e2e,715px 468px #2e2e2e,804px 468px #2e2e2e,893px 468px #2e2e2e,982px 468px #2e2e2e,1072px 468px #2e2e2e,0px 546px #2e2e2e,90px 546px #2e2e2e,179px 546px #2e2e2e,268px 546px #2e2e2e,358px 546px #2e2e2e,447px 546px #2e2e2e,536px 546px #2e2e2e,625px 546px #2e2e2e,715px 546px #2e2e2e,804px 546px #2e2e2e,893px 546px #2e2e2e,982px 546px #2e2e2e,1072px 546px #2e2e2e,0px 624px #2e2e2e,90px 624px #2e2e2e,179px 624px #2e2e2e,268px 624px #2e2e2e,358px 624px #2e2e2e,447px 624px #2e2e2e,536px 624px #2e2e2e,625px 624px #2e2e2e,715px 624px #2e2e2e,804px 624px #2e2e2e,893px 624px #2e2e2e,982px 624px #2e2e2e,1072px 624px #2e2e2e,0px 702px #2e2e2e,90px 702px #2e2e2e,179px 702px #2e2e2e,268px 702px #2e2e2e,358px 702px #2e2e2e,447px 702px #2e2e2e,536px 702px #2e2e2e,625px 702px #2e2e2e,715px 702px #2e2e2e,804px 702px #2e2e2e,893px 702px #2e2e2e,982px 702px #2e2e2e,1072px 702px #2e2e2e,0px 780px #2e2e2e,90px 780px #2e2e2e,179px 780px #2e2e2e,268px 780px #2e2e2e,358px 780px #2e2e2e,447px 780px #2e2e2e,536px 780px #2e2e2e,625px 780px #2e2e2e,715px 780px #2e2e2e,804px 780px #2e2e2e,893px 780px #2e2e2e,982px 780px #2e2e2e,1072px 780px #2e2e2e,0px 858px #2e2e2e,90px 858px #2e2e2e,179px 858px #2e2e2e,268px 858px #2e2e2e,358px 858px #2e2e2e,447px 858px #2e2e2e,536px 858px #2e2e2e,625px 858px #2e2e2e,715px 858px #2e2e2e,804px 858px #2e2e2e,893px 858px #2e2e2e,982px 858px #2e2e2e,1072px 858px #2e2e2e,0px 936px #2e2e2e,90px 936px #2e2e2e,179px 936px #2e2e2e,268px 936px #2e2e2e,358px 936px #2e2e2e,447px 936px #2e2e2e,536px 936px #2e2e2e,625px 936px #2e2e2e,715px 936px #2e2e2e,804px 936px #2e2e2e,893px 936px #2e2e2e,982px 936px #2e2e2e,1072px 936px #2e2e2e"></div>
<div class="b" style="left:1336px;top:460px;width:140px;height:33px;background:#fff;"></div>
<span class="t s" style="left:1339.07px;top:464.40px;font-size:24.5px;line-height:27px;color:#222;letter-spacing:1.059px;-webkit-text-stroke:0.7px #222;">description</span>
<div class="b" style="left:1339.5px;top:506.5px;width:415px;height:147px;background:#fff;border:2px solid #dcdcdc;border-radius:9px;box-sizing:border-box;"></div>
<span class="t s" style="left:1363.21px;top:520.00px;font-size:24.5px;line-height:27px;color:#222;letter-spacing:0.628px;">Test description 1</span>
<svg class="b" style="left:1710px;top:521.5px;" width="21" height="21" viewBox="0 0 21 21"><circle cx="10.5" cy="10.5" r="10" fill="#222"/><path d="M7.5 7.5 L13.5 13.5 M13.5 7.5 L7.5 13.5" stroke="#fff" stroke-width="1.7" stroke-linecap="round"/></svg>
<div class="b" style="left:1840px;top:515px;width:56px;height:40px;background:#fff;"></div>
<span class="t s" style="left:1847.95px;top:522.50px;font-size:24.5px;line-height:27px;color:#222;letter-spacing:0.453px;-webkit-text-stroke:1.1px #222;">Qty</span>
<div class="b" style="left:1905.6px;top:504.6px;width:206.8px;height:58.6px;background:#fff;border:2px solid #dcdcdc;border-radius:9px;box-sizing:border-box;"></div>
<span class="t s" style="left:2042.36px;top:521.40px;font-size:24.5px;line-height:27px;color:#222;">1</span>
<div class="b" style="left:1336px;top:700px;width:140px;height:33px;background:#fff;"></div>
<span class="t s" style="left:1339.07px;top:704.40px;font-size:24.5px;line-height:27px;color:#222;letter-spacing:1.059px;-webkit-text-stroke:0.7px #222;">description</span>
<div class="b" style="left:1339.5px;top:746.5px;width:415px;height:147px;background:#fff;border:2px solid #dcdcdc;border-radius:9px;box-sizing:border-box;"></div>
<span class="t s" style="left:1363.21px;top:760.00px;font-size:24.5px;line-height:27px;color:#222;letter-spacing:0.628px;">Test description 2</span>
<svg class="b" style="left:1710px;top:761.5px;" width="21" height="21" viewBox="0 0 21 21"><circle cx="10.5" cy="10.5" r="10" fill="#222"/><path d="M7.5 7.5 L13.5 13.5 M13.5 7.5 L7.5 13.5" stroke="#fff" stroke-width="1.7" stroke-linecap="round"/></svg>
<div class="b" style="left:1840px;top:755px;width:56px;height:40px;background:#fff;"></div>
<span class="t s" style="left:1847.95px;top:762.50px;font-size:24.5px;line-height:27px;color:#222;letter-spacing:0.453px;-webkit-text-stroke:1.1px #222;">Qty</span>
<div class="b" style="left:1905.6px;top:744.6px;width:206.8px;height:58.6px;background:#fff;border:2px solid #dcdcdc;border-radius:9px;box-sizing:border-box;"></div>
<span class="t s" style="left:2042.98px;top:761.40px;font-size:24.5px;line-height:27px;color:#222;">2</span>
<div class="b" style="left:1336px;top:940px;width:140px;height:33px;background:#fff;"></div>
<span class="t s" style="left:1339.07px;top:944.40px;font-size:24.5px;line-height:27px;color:#222;letter-spacing:1.059px;-webkit-text-stroke:0.7px #222;">description</span>
<div class="b" style="left:1339.5px;top:986.5px;width:415px;height:147px;background:#fff;border:2px solid #dcdcdc;border-radius:9px;box-sizing:border-box;"></div>
<span class="t s" style="left:1363.21px;top:1000.00px;font-size:24.5px;line-height:27px;color:#222;letter-spacing:0.621px;">Test description 3</span>
<svg class="b" style="left:1710px;top:1001.5px;" width="21" height="21" viewBox="0 0 21 21"><circle cx="10.5" cy="10.5" r="10" fill="#222"/><path d="M7.5 7.5 L13.5 13.5 M13.5 7.5 L7.5 13.5" stroke="#fff" stroke-width="1.7" stroke-linecap="round"/></svg>
<div class="b" style="left:1840px;top:995px;width:56px;height:40px;background:#fff;"></div>
<span class="t s" style="left:1847.95px;top:1002.50px;font-size:24.5px;line-height:27px;color:#222;letter-spacing:0.453px;-webkit-text-stroke:1.1px #222;">Qty</span>
<div class="b" style="left:1905.6px;top:984.6px;width:206.8px;height:58.6px;background:#fff;border:2px solid #dcdcdc;border-radius:9px;box-sizing:border-box;"></div>
<span class="t s" style="left:2043.34px;top:1001.40px;font-size:24.5px;line-height:27px;color:#222;">3</span>
<svg class="b" style="left:1191.5px;top:380px;" width="1157.5" height="1022" viewBox="0 0 1157.5 1022"><path d="M0 1H1157.5M1 0V1022M1156.5 0V1022" fill="none" stroke="#a3c5ec" stroke-width="2" stroke-dasharray="6 4.2"/></svg>
<svg class="b" style="left:1322.8px;top:415.9px;" width="448.3" height="235.9" viewBox="0 0 448.3 235.9"><path d="M0 1H448.3M0 234.9H448.3M1 0V235.9M447.3 0V235.9" fill="none" stroke="#a3c5ec" stroke-width="2" stroke-dasharray="6 4.2"/></svg>
<svg class="b" style="left:1768.8px;top:494px;" width="359.8" height="80" viewBox="0 0 359.8 80"><path d="M0 1H359.8M0 79H359.8M1 0V80M358.8 0V80" fill="none" stroke="#a3c5ec" stroke-width="2" stroke-dasharray="6 4.2"/></svg>
<svg class="b" style="left:2346.7px;top:457.9px;" width="387.7" height="80" viewBox="0 0 387.7 80"><path d="M0 1H387.7M0 79H387.7M1 0V80M386.7 0V80" fill="none" stroke="#a3c5ec" stroke-width="2" stroke-dasharray="6 4.2"/></svg>
<svg class="b" style="left:2346.7px;top:535.9px;" width="387.7" height="80" viewBox="0 0 387.7 80"><path d="M0 1H387.7M0 79H387.7M1 0V80M386.7 0V80" fill="none" stroke="#a3c5ec" stroke-width="2" stroke-dasharray="6 4.2"/></svg>
<div class="b" style="left:1191px;top:380px;width:2px;height:2px;background:#2e2e2e;box-shadow:0px 0px #2e2e2e,0px 78px #2e2e2e,0px 156px #2e2e2e,0px 234px #2e2e2e,0px 312px #2e2e2e,0px 390px #2e2e2e,0px 468px #2e2e2e,0px 546px #2e2e2e,0px 624px #2e2e2e,0px 702px #2e2e2e,0px 780px #2e2e2e,0px 858px #2e2e2e,0px 936px #2e2e2e,193px 0px #2e2e2e,385px 0px #2e2e2e,578px 0px #2e2e2e,770px 0px #2e2e2e,963px 0px #2e2e2e,1156px 0px #2e2e2e,1156px 78px #2e2e2e,1156px 156px #2e2e2e,1156px 234px #2e2e2e,1156px 312px #2e2e2e,1156px 390px #2e2e2e,1156px 468px #2e2e2e,1156px 546px #2e2e2e,1156px 624px #2e2e2e,1156px 702px #2e2e2e,1156px 780px #2e2e2e,1156px 858px #2e2e2e,1156px 936px #2e2e2e,1348px 78px #2e2e2e,1348px 156px #2e2e2e,1348px 234px #2e2e2e,1541px 78px #2e2e2e,1541px 156px #2e2e2e,1541px 234px #2e2e2e,132px 36px #2e2e2e,132px 114px #2e2e2e,132px 192px #2e2e2e,132px 270px #2e2e2e,221px 36px #2e2e2e,310px 36px #2e2e2e,400px 36px #2e2e2e,489px 36px #2e2e2e,578px 36px #2e2e2e,578px 114px #2e2e2e,578px 192px #2e2e2e,578px 270px #2e2e2e,667px 114px #2e2e2e,667px 192px #2e2e2e,757px 114px #2e2e2e,757px 192px #2e2e2e,846px 114px #2e2e2e,846px 192px #2e2e2e,935px 114px #2e2e2e,935px 192px #2e2e2e"></div>
<div class="b" style="left:2362px;top:468px;width:357px;height:60px;background:#5090d7;border-radius:8px;"></div>
<div class="b" style="left:2362px;top:546px;width:357px;height:60px;background:#5090d7;border-radius:8px;"></div>
<span class="t s" style="left:2490.10px;top:486.00px;font-size:24.5px;line-height:27px;color:#fff;letter-spacing:0.038px;-webkit-text-stroke:0.6px #fff;">Add Row</span>
<span class="t s" style="left:2465.64px;top:564.00px;font-size:24.5px;line-height:27px;color:#fff;letter-spacing:-0.018px;-webkit-text-stroke:0.6px #fff;">Remove Row</span>
<div class="b" style="left:574px;top:1342px;width:338px;height:52px;background:#fbfbfb;border-radius:9px 9px 0 0;box-shadow:0 0 28px rgba(0,0,0,.055);"></div>
<span class="t m" style="left:598.90px;top:1356.00px;font-size:21.75px;line-height:25px;color:#4f4f4f;">All queries completed.</span>
<div class="b" style="left:2982px;top:90px;width:554px;height:70px;background:#f4f4f4;"></div>
<div class="b" style="left:2982px;top:160px;width:554px;height:2px;background:#dddddd;"></div>
<svg class="b" style="left:3131px;top:111px;" width="31" height="29" viewBox="0 0 31 29"><path d="M4.2 7.6 L14.7 2 L25.2 7.6 L14.7 13.2Z" fill="#9a9a9a" stroke="#9a9a9a" stroke-width="2" stroke-linejoin="round"/><path d="M1.9 17.9 L5.3 15.8 L14.7 21.2 L24.1 15.8 L27.5 17.9 L14.7 26.2Z" fill="#9a9a9a" stroke="#9a9a9a" stroke-width="1.4" stroke-linejoin="round"/></svg>
<span class="t s" style="left:3166.16px;top:112.00px;font-size:24px;line-height:27px;color:#9a9a9a;letter-spacing:1.292px;-webkit-text-stroke:0.65px #9a9a9a;">Inspect</span>
<svg class="b" style="left:3291.9px;top:111.3px;" width="27" height="30" viewBox="0 0 27 30"><rect x="3.2" y="0.6" width="7.4" height="3.6" rx="0.6" fill="#2d2d2d"/><rect x="13.6" y="0.6" width="7.4" height="3.6" rx="0.6" fill="#2d2d2d"/><path d="M2.6 6.6H21.4Q24 6.6 24 9.2V13.2A9.2 9.2 0 0 0 9.6 22.6H2.6Q0.6 22.6 0.6 20.4V8.8Q0.6 6.6 2.6 6.6Z" fill="#2d2d2d"/><circle cx="17.4" cy="20.6" r="7.6" fill="#2d2d2d" stroke="#f4f4f4" stroke-width="0"/><circle cx="17.4" cy="20.6" r="8.8" fill="none" stroke="#f4f4f4" stroke-width="1.6"/><path d="M17.4 16.6V24.6M13.4 20.6H21.4" stroke="#fff" stroke-width="2" stroke-linecap="round"/></svg>
<span class="t s" style="left:3325.86px;top:112.00px;font-size:24px;line-height:27px;color:#222;letter-spacing:1.246px;-webkit-text-stroke:0.65px #222;">Insert</span>
<div class="b" style="left:3292px;top:156px;width:100px;height:4px;background:#333;"></div>
<span class="t s" style="left:3005.65px;top:183.90px;font-size:24px;line-height:27px;color:#222;letter-spacing:1.229px;-webkit-text-stroke:0.7px #222;">Components</span>
<span class="t s" style="left:3184.13px;top:183.90px;font-size:24px;line-height:27px;color:#999;letter-spacing:1.323px;-webkit-text-stroke:0.7px #999;">Modules</span>
<div class="b" style="left:3006px;top:228px;width:146px;height:4px;background:#333;"></div>
<div class="b" style="left:2982px;top:232px;width:554px;height:2px;background:#e2e2e2;"></div>
<div class="b" style="left:3006px;top:254px;width:340px;height:64px;background:#fff;border:2px solid #d8d8d8;border-radius:9px;box-sizing:border-box;"></div>
<span class="t s" style="left:3029.72px;top:273.90px;font-size:24px;line-height:27px;color:#c2c2c2;letter-spacing:0.777px;">Search components</span>
<svg class="b" style="left:3298px;top:275px;" width="24" height="24" viewBox="0 0 24 24"><circle cx="9" cy="8.8" r="6.8" fill="none" stroke="#888" stroke-width="2"/><path d="M14 14 L21.6 21.6" stroke="#888" stroke-width="2.2" stroke-linecap="round"/></svg>
<div class="b" style="left:3368px;top:260px;width:152px;height:52px;background:#fff;border:2px solid #dddddd;border-radius:9px;box-sizing:border-box;"></div>
<div class="b" style="left:3370px;top:262px;width:74px;height:48px;background:#f4f4f4;border-radius:7px 0 0 7px;"></div>
<div class="b" style="left:3444px;top:262px;width:2px;height:48px;background:#dddddd;"></div>
<div class="b" style="left:3394px;top:274.2px;width:6.2px;height:4.5px;background:#333;"></div>
<div class="b" style="left:3405px;top:274.2px;width:15px;height:4.5px;background:#333;"></div>
<div class="b" style="left:3394px;top:283.7px;width:6.2px;height:4.5px;background:#333;"></div>
<div class="b" style="left:3405px;top:283.7px;width:15px;height:4.5px;background:#333;"></div>
<div class="b" style="left:3394px;top:293.2px;width:6.2px;height:4.5px;background:#333;"></div>
<div class="b" style="left:3405px;top:293.2px;width:15px;height:4.5px;background:#333;"></div>
<div class="b" style="left:3470px;top:274.2px;width:9.8px;height:9.8px;background:#c9c9c9;"></div>
<div class="b" style="left:3484.2px;top:274.2px;width:9.8px;height:9.8px;background:#c9c9c9;"></div>
<div class="b" style="left:3470px;top:288px;width:9.8px;height:9.8px;background:#c9c9c9;"></div>
<div class="b" style="left:3484.2px;top:288px;width:9.8px;height:9.8px;background:#c9c9c9;"></div>
<span class="t s" style="left:3005.85px;top:340.30px;font-size:24px;line-height:27px;color:#8c8c8c;letter-spacing:1.012px;-webkit-text-stroke:1.1px #8c8c8c;">Commonly used</span>
<div class="b" style="left:3006.3px;top:390.3px;width:115.7px;height:115.7px;background:#f4f4f4;border-radius:8px;box-shadow:0 2px 3px rgba(0,0,0,.06),inset 0 0 0 1.5px #ededed;"></div>
<svg class="b" style="left:3006.5px;top:390.6px;" width="115" height="115" viewBox="0 0 115 115"><rect x="18.6" y="24.6" width="77.2" height="65" rx="4.5" fill="#fff"/><rect x="20" y="26" width="75" height="10.4" fill="#dddddd"/><rect x="20" y="81.8" width="75" height="7" fill="#dddddd"/><path d="M33.5 36V82M49.6 36V82M65.6 36V82M81.7 36V82M20 50.7H95M20 67.2H95" stroke="#e3e3e3" stroke-width="3.2" fill="none"/><rect x="18.6" y="24.6" width="77.2" height="65" rx="4.5" fill="none" stroke="#686868" stroke-width="3"/></svg>
<span class="t s" style="left:3154.46px;top:406.60px;font-size:23.5px;line-height:26px;color:#333;font-weight:700;letter-spacing:0.942px;">Table</span>
<span class="t s" style="left:3152.94px;top:437.90px;font-size:22px;line-height:25px;color:#999;letter-spacing:0.804px;">Display tabular data with</span>
<span class="t s" style="left:3153.27px;top:465.75px;font-size:22px;line-height:25px;color:#999;letter-spacing:0.942px;">pagination.</span>
<div class="b" style="left:3006.3px;top:530.33px;width:115.7px;height:115.7px;background:#f4f4f4;border-radius:8px;box-shadow:0 2px 3px rgba(0,0,0,.06),inset 0 0 0 1.5px #ededed;"></div>
<svg class="b" style="left:3006.5px;top:530.63px;" width="115" height="115" viewBox="0 0 115 115"><rect x="23.7" y="43.3" width="67.4" height="27.5" rx="4" fill="#5d9ce2" stroke="#4f8fdb" stroke-width="1"/><text x="57.6" y="63.2" text-anchor="middle" font-family="Liberation Sans, sans-serif" font-weight="700" font-size="17" fill="#fff" textLength="50" lengthAdjust="spacingAndGlyphs">Action</text></svg>
<span class="t s" style="left:3153.17px;top:546.63px;font-size:23.5px;line-height:26px;color:#333;font-weight:700;letter-spacing:0.673px;">Button</span>
<span class="t s" style="left:3154.26px;top:577.93px;font-size:22px;line-height:25px;color:#999;letter-spacing:0.650px;">Trigger actions like run queries,</span>
<span class="t s" style="left:3153.82px;top:605.78px;font-size:22px;line-height:25px;color:#999;letter-spacing:0.813px;">export data, or open other apps.</span>
<div class="b" style="left:3006.3px;top:670.3600000000001px;width:115.7px;height:115.7px;background:#f4f4f4;border-radius:8px;box-shadow:0 2px 3px rgba(0,0,0,.06),inset 0 0 0 1.5px #ededed;"></div>
<svg class="b" style="left:3006.5px;top:670.6600000000001px;" width="115" height="115" viewBox="0 0 115 115"><rect x="19" y="27.2" width="78.6" height="24.4" rx="5" fill="#fff" stroke="#dddddd" stroke-width="2.8"/><rect x="25.4" y="35.4" width="22" height="7.6" fill="#dddddd"/><path d="M53.6 32.8H61M53.6 46.2H61M57.3 32.8V46.2" stroke="#5c5c5c" stroke-width="2.2" fill="none"/><rect x="19" y="63.2" width="78.6" height="24.4" rx="5" fill="#fff" stroke="#dddddd" stroke-width="2.8"/><circle cx="30.6" cy="73.6" r="4.6" fill="none" stroke="#dddddd" stroke-width="2"/><path d="M34 77.4 L39.6 82.4" stroke="#dddddd" stroke-width="2.2" stroke-linecap="round"/><rect x="45.8" y="71.6" width="41.4" height="7.6" fill="#dddddd"/></svg>
<span class="t s" style="left:3154.46px;top:686.66px;font-size:23.5px;line-height:26px;color:#333;font-weight:700;letter-spacing:0.558px;">Text Input</span>
<span class="t s" style="left:3153.60px;top:717.96px;font-size:22px;line-height:25px;color:#999;letter-spacing:0.830px;">Control other components or</span>
<span class="t s" style="left:3153.82px;top:745.81px;font-size:22px;line-height:25px;color:#999;letter-spacing:0.956px;">queries with text.</span>
<div class="b" style="left:3006.3px;top:810.3900000000001px;width:115.7px;height:115.7px;background:#f4f4f4;border-radius:8px;box-shadow:0 2px 3px rgba(0,0,0,.06),inset 0 0 0 1.5px #ededed;"></div>
<svg class="b" style="left:3006.5px;top:810.69px;" width="115" height="115" viewBox="0 0 115 115"><rect x="19" y="45.4" width="78.6" height="24.4" rx="5" fill="#fff" stroke="#dddddd" stroke-width="2.8"/><rect x="27.4" y="53.4" width="37.8" height="7.6" fill="#dddddd"/><path d="M76.4 53.6 L82.6 59.6 L88.8 53.6" fill="none" stroke="#5c5c5c" stroke-width="3" stroke-linecap="round" stroke-linejoin="round"/></svg>
<span class="t s" style="left:3153.17px;top:826.69px;font-size:23.5px;line-height:26px;color:#333;font-weight:700;letter-spacing:0.790px;">Dropdown</span>
<span class="t s" style="left:3153.71px;top:857.99px;font-size:22px;line-height:25px;color:#999;letter-spacing:0.622px;">Select one value from a list of</span>
<span class="t s" style="left:3153.82px;top:885.84px;font-size:22px;line-height:25px;color:#999;letter-spacing:1.150px;">options.</span>
<div class="b" style="left:3006.3px;top:950.4200000000001px;width:115.7px;height:115.7px;background:#f4f4f4;border-radius:8px;box-shadow:0 2px 3px rgba(0,0,0,.06),inset 0 0 0 1.5px #ededed;"></div>
<svg class="b" style="left:3006.5px;top:950.72px;" width="115" height="115" viewBox="0 0 115 115"><path d="M17.2 31.9V23.4Q17.2 19.4 21.2 19.4H29.7M85.1 19.4H93.6Q97.6 19.4 97.6 23.4V31.9M97.6 84.6V93.1Q97.6 97.1 93.6 97.1H85.1M29.7 97.1H21.2Q17.2 97.1 17.2 93.1V84.6" fill="none" stroke="#dddddd" stroke-width="2.6"/><text x="24.6" y="53.5" font-family="Liberation Sans, sans-serif" font-weight="700" font-size="36.5" fill="#686868">A</text><rect x="55.7" y="29.6" width="33.9" height="7.5" fill="#dddddd"/><rect x="55.7" y="45.4" width="33.9" height="7.5" fill="#dddddd"/><rect x="25.4" y="63.5" width="64.2" height="7.6" fill="#dddddd"/><rect x="25.4" y="79.4" width="64.2" height="7.6" fill="#dddddd"/></svg>
<span class="t s" style="left:3154.46px;top:980.72px;font-size:23.5px;line-height:26px;color:#333;font-weight:700;letter-spacing:1.013px;">Text</span>
<span class="t s" style="left:3153.71px;top:1012.02px;font-size:22px;line-height:25px;color:#999;letter-spacing:0.784px;">Supports markdown or HTML.</span>
<div class="b" style="left:3006.3px;top:1090.45px;width:115.7px;height:115.7px;background:#f4f4f4;border-radius:8px;box-shadow:0 2px 3px rgba(0,0,0,.06),inset 0 0 0 1.5px #ededed;"></div>
<svg class="b" style="left:3006.5px;top:1090.75px;" width="115" height="115" viewBox="0 0 115 115"><rect x="17.4" y="17.2" width="80" height="74" fill="#fff"/><path d="M17.2 29.9V21.4Q17.2 17.4 21.2 17.4H29.7M85.1 17.4H93.6Q97.6 17.4 97.6 21.4V29.9M97.6 78.7V87.2Q97.6 91.2 93.6 91.2H85.1M29.7 91.2H21.2Q17.2 91.2 17.2 87.2V78.7" fill="none" stroke="#dddddd" stroke-width="2.6"/><rect x="26.8" y="28.6" width="61.4" height="16.8" rx="5.5" fill="#fff" stroke="#dddddd" stroke-width="2.8"/><rect x="25.4" y="53.3" width="64.2" height="20" rx="6" fill="#e9e9e9"/><circle cx="90.5" cy="88.2" r="11" fill="#686868"/><path d="M85.3 88.2H95.7M90.5 83.0V93.4" stroke="#fff" stroke-width="2.6" stroke-linecap="round"/></svg>
<span class="t s" style="left:3153.76px;top:1106.75px;font-size:23.5px;line-height:26px;color:#333;font-weight:700;letter-spacing:0.593px;">Container</span>
<span class="t s" style="left:3153.60px;top:1138.05px;font-size:22px;line-height:25px;color:#999;letter-spacing:0.810px;">Group things together into groups,</span>
<span class="t s" style="left:3153.82px;top:1165.90px;font-size:22px;line-height:25px;color:#999;letter-spacing:0.693px;">also nestable.</span>
<div class="b" style="left:3006.3px;top:1230.4800000000002px;width:115.7px;height:115.7px;background:#f4f4f4;border-radius:8px;box-shadow:0 2px 3px rgba(0,0,0,.06),inset 0 0 0 1.5px #ededed;"></div>
<svg class="b" style="left:3006.5px;top:1230.7800000000002px;" width="115" height="115" viewBox="0 0 115 115"><rect x="17.4" y="17.2" width="80" height="74" fill="#fff"/><path d="M17.2 29.9V21.4Q17.2 17.4 21.2 17.4H29.7M85.1 17.4H93.6Q97.6 17.4 97.6 21.4V29.9M97.6 78.7V87.2Q97.6 91.2 93.6 91.2H85.1M29.7 91.2H21.2Q17.2 91.2 17.2 87.2V78.7" fill="none" stroke="#dddddd" stroke-width="2.6"/><rect x="27.4" y="25.4" width="18.2" height="10" fill="#686868"/><rect x="53.5" y="25.4" width="18.2" height="10" fill="#dddddd"/><rect x="17.4" y="40.3" width="80" height="2.8" fill="#ececec"/><rect x="27.4" y="40.3" width="18.2" height="3" fill="#5d9ce2"/><rect x="25.4" y="53.5" width="64.2" height="20" rx="6" fill="#e9e9e9"/><circle cx="90.5" cy="88.2" r="11" fill="#686868"/><path d="M85.3 88.2H95.7M90.5 83.0V93.4" stroke="#fff" stroke-width="2.6" stroke-linecap="round"/></svg>
<span class="t s" style="left:3154.46px;top:1246.78px;font-size:23.5px;line-height:26px;color:#333;font-weight:700;letter-spacing:0.653px;">Tabbed Container</span>
<span class="t s" style="left:3153.60px;top:1278.08px;font-size:22px;line-height:25px;color:#999;letter-spacing:0.883px;">Container with a tab to switch</span>
<span class="t s" style="left:3153.27px;top:1305.93px;font-size:22px;line-height:25px;color:#999;letter-spacing:1.015px;">between different states.</span>
<div class="b" style="left:3006.3px;top:1370.51px;width:115.7px;height:115.7px;background:#f4f4f4;border-radius:8px;box-shadow:0 2px 3px rgba(0,0,0,.06),inset 0 0 0 1.5px #ededed;"></div>
<svg class="b" style="left:3006.5px;top:1370.81px;" width="115" height="115" viewBox="0 0 115 115"><rect x="17.4" y="17.2" width="80" height="72" fill="#fff"/><path d="M17.2 29.9V21.4Q17.2 17.4 21.2 17.4H29.7M85.1 17.4H93.6Q97.6 17.4 97.6 21.4V29.9M97.6 76.9V85.4Q97.6 89.4 93.6 89.4H85.1M29.7 89.4H21.2Q17.2 89.4 17.2 85.4V76.9" fill="none" stroke="#dddddd" stroke-width="2.6"/><rect x="25.4" y="27.2" width="64.2" height="28" rx="6.5" fill="#e9e9e9"/><rect x="49.5" y="63.3" width="40.1" height="17.8" rx="6" fill="#5d9ce2"/><circle cx="90.5" cy="88.2" r="11" fill="#686868"/><path d="M85.3 88.2H95.7M90.5 83.0V93.4" stroke="#fff" stroke-width="2.6" stroke-linecap="round"/></svg>
<span class="t s" style="left:3153.17px;top:1386.81px;font-size:23.5px;line-height:26px;color:#333;font-weight:700;letter-spacing:0.496px;">Form</span>
<span class="t s" style="left:3153.60px;top:1418.11px;font-size:22px;line-height:25px;color:#999;letter-spacing:0.778px;">Group inputs together and submit</span>
<span class="t s" style="left:3153.82px;top:1445.96px;font-size:22px;line-height:25px;color:#999;letter-spacing:0.977px;">at once.</span>
<div class="b" style="left:3006.3px;top:1510.5400000000002px;width:115.7px;height:115.7px;background:#f4f4f4;border-radius:8px;box-shadow:0 2px 3px rgba(0,0,0,.06),inset 0 0 0 1.5px #ededed;"></div>
<svg class="b" style="left:3006.5px;top:1510.8400000000001px;" width="115" height="115" viewBox="0 0 115 115"><rect x="17.4" y="19.2" width="80" height="78.6" fill="#fff"/><path d="M17.2 31.9V23.4Q17.2 19.4 21.2 19.4H29.7M85.1 19.4H93.6Q97.6 19.4 97.6 23.4V31.9M97.6 84.6V93.1Q97.6 97.1 93.6 97.1H85.1M29.7 97.1H21.2Q17.2 97.1 17.2 93.1V84.6" fill="none" stroke="#dddddd" stroke-width="2.6"/><path d="M35.2 35.4 L49.5 45.3 L67.7 31 L81.6 43.1" fill="none" stroke="#dddddd" stroke-width="3"/><circle cx="35.2" cy="35.4" r="4" fill="#dddddd"/><circle cx="49.5" cy="45.3" r="4" fill="#dddddd"/><circle cx="67.7" cy="31" r="4" fill="#dddddd"/><circle cx="81.6" cy="43.1" r="4" fill="#dddddd"/><rect x="31.4" y="49.5" width="8.2" height="38.4" rx="1.5" fill="#8ebcf0"/><rect x="45.6" y="61.3" width="8" height="26.6" rx="1.5" fill="#e9c98d"/><rect x="61.5" y="51.3" width="8" height="36.6" rx="1.5" fill="#8ebcf0"/><rect x="75.6" y="59.5" width="8" height="28.4" rx="1.5" fill="#e9c98d"/><rect x="27.4" y="87.8" width="60" height="2.9" fill="#e8e8e8"/></svg>
<span class="t s" style="left:3153.76px;top:1540.84px;font-size:23.5px;line-height:26px;color:#333;font-weight:700;letter-spacing:0.985px;">Chart</span>
<span class="t s" style="left:3154.59px;top:1572.14px;font-size:22px;line-height:25px;color:#999;letter-spacing:0.591px;">Visualize your data using Plotly.js</span>
<div class="b" style="left:3006.3px;top:1650.57px;width:115.7px;height:115.7px;background:#f4f4f4;border-radius:8px;box-shadow:0 2px 3px rgba(0,0,0,.06),inset 0 0 0 1.5px #ededed;"></div>
<svg class="b" style="left:3006.5px;top:1650.87px;" width="115" height="115" viewBox="0 0 115 115"><rect x="25.2" y="24.9" width="66.6" height="64.5" rx="4.5" fill="#fff"/><rect x="26" y="26" width="65" height="10" fill="#dddddd"/><path d="M58.2 36V88M26 55.1H91M26 72.8H91" stroke="#e3e3e3" stroke-width="3" fill="none"/><rect x="25.2" y="24.9" width="66.6" height="64.5" rx="4.5" fill="none" stroke="#686868" stroke-width="3"/></svg>
<span class="t s" style="left:3153.17px;top:1680.87px;font-size:23.5px;line-height:26px;color:#333;font-weight:700;letter-spacing:0.539px;">Key Value Map</span>
<span class="t s" style="left:3152.94px;top:1712.17px;font-size:22px;line-height:25px;color:#999;letter-spacing:0.549px;">Display key value pairs in a table.</span>
<div class="b" style="left:3006.3px;top:1790.6000000000001px;width:115.7px;height:115.7px;background:#f4f4f4;border-radius:8px;box-shadow:0 2px 3px rgba(0,0,0,.06),inset 0 0 0 1.5px #ededed;"></div>
<svg class="b" style="left:3006.5px;top:1790.9px;" width="115" height="115" viewBox="0 0 115 115"><rect x="27.5" y="24" width="68" height="48.5" rx="5" fill="#dddddd"/><rect x="23.4" y="21" width="66.2" height="46.1" rx="4.5" fill="#fff"/><rect x="24" y="22" width="65" height="5" fill="#dddddd"/><rect x="23.4" y="21" width="66.2" height="46.1" rx="4.5" fill="none" stroke="#686868" stroke-width="3"/><rect x="53.5" y="79" width="39.8" height="17.9" rx="6" fill="#5d9ce2"/></svg>
<span class="t s" style="left:3153.17px;top:1806.90px;font-size:23.5px;line-height:26px;color:#333;font-weight:700;letter-spacing:1.339px;">Modal</span>
<span class="t s" style="left:3154.70px;top:1838.20px;font-size:22px;line-height:25px;color:#999;letter-spacing:0.607px;">Add a modal (hidden behind a</span>
<span class="t s" style="left:3153.27px;top:1866.05px;font-size:22px;line-height:25px;color:#999;letter-spacing:0.882px;">button) that you can add</span>
<div class="b" style="left:3006.3px;top:1930.6299999999999px;width:115.7px;height:115.7px;background:#f4f4f4;border-radius:8px;box-shadow:0 2px 3px rgba(0,0,0,.06),inset 0 0 0 1.5px #ededed;"></div>
<svg class="b" style="left:3006.5px;top:1930.9299999999998px;" width="115" height="115" viewBox="0 0 115 115"><rect x="25.2" y="30.7" width="66.6" height="64" rx="4.5" fill="#fff"/><circle cx="41.4" cy="44.7" r="8" fill="#e9c98d"/><circle cx="70" cy="62" r="16.6" fill="#7db68e"/><rect x="25.2" y="30.7" width="66.6" height="64" rx="4.5" fill="none" stroke="#686868" stroke-width="3"/></svg>
<span class="t s" style="left:3153.17px;top:1960.93px;font-size:23.5px;line-height:26px;color:#333;font-weight:700;letter-spacing:1.104px;">Image</span>
<span class="t s" style="left:3152.94px;top:1992.23px;font-size:22px;line-height:25px;color:#999;letter-spacing:0.380px;">Display an image from a URL.</span>
<div class="b" style="left:3406px;top:1854px;width:88px;height:88px;background:#222;border-radius:44px;box-shadow:0 4px 22px rgba(0,0,0,.22);"></div>
<svg class="b" style="left:3426px;top:1874px;" width="48" height="48" viewBox="0 0 48 48"><circle cx="24.3" cy="24" r="20.1" fill="#fff"/><path d="M8.4 33 L6.4 42.6 L16.8 41Z" fill="#fff" stroke="#fff" stroke-width="1.6" stroke-linejoin="round"/><text x="24.2" y="34.4" text-anchor="middle" font-family="Liberation Sans, sans-serif" font-weight="400" font-size="29" fill="#222" stroke="#222" stroke-width="0.7">?</text></svg>
<div class="b" style="left:558px;top:1392px;width:2422px;height:594px;background:#fff;"></div>
<div class="b" style="left:558px;top:1390px;width:2422px;height:2px;background:#dddddd;"></div>
<div class="b" style="left:1196px;top:1392px;width:2px;height:594px;background:#e6e6e6;"></div>
<div class="b" style="left:558px;top:1486px;width:2422px;height:2px;background:#e6e6e6;"></div>
<div class="b" style="left:598px;top:1408px;width:410px;height:64px;background:#fff;border:2px solid #d6d6d6;border-radius:9px;box-sizing:border-box;"></div>
<span class="t s" style="left:621.32px;top:1425.90px;font-size:24px;line-height:27px;color:#c2c2c2;letter-spacing:0.792px;">Search</span>
<div class="b" style="left:1020px;top:1408px;width:144px;height:64px;background:#eef4fd;border-radius:9px;"></div>
<span class="t s" style="left:1042.47px;top:1421.05px;font-size:33px;line-height:37px;color:#4a8ad4;-webkit-text-stroke:0.5px #4a8ad4;">+</span>
<span class="t s" style="left:1067.21px;top:1425.90px;font-size:24.5px;line-height:27px;color:#4a8ad4;letter-spacing:0.894px;-webkit-text-stroke:1.15px #4a8ad4;">New</span>
<svg class="b" style="left:1128.2px;top:1436px;" width="18" height="13" viewBox="0 0 18 13"><path d="M3.8 3 L9 8 L14.2 3" fill="none" stroke="#4a8ad4" stroke-width="2.8" stroke-linecap="round" stroke-linejoin="round"/></svg>
<span class="t s" style="left:597.54px;top:1506.10px;font-size:24px;line-height:27px;color:#b3b3b3;letter-spacing:0.844px;-webkit-text-stroke:0.65px #b3b3b3;">Showing all 2</span>
<svg class="b" style="left:1131px;top:1505px;" width="30" height="30" viewBox="0 0 30 30"><g fill="none" stroke="#9a9a9a" stroke-width="2.2" stroke-linecap="round"><path d="M1.5 6H17M25 6H28.5M1.5 15H5M13 15H28.5M1.5 24H17M25 24H28.5"/><circle cx="21" cy="6" r="3.4"/><circle cx="9" cy="15" r="3.4"/><circle cx="21" cy="24" r="3.4"/></g></svg>
<div class="b" style="left:590px;top:1552px;width:582px;height:56px;background:#eef4fd;border-radius:9px;"></div>
<div class="b" style="left:602px;top:1566px;width:32px;height:32px;background:#dfb962;border-radius:6px;"></div>
<span class="t s" style="left:605.88px;top:1572.04px;font-size:19px;line-height:21px;color:#fff;font-weight:700;letter-spacing:1.770px;">JS</span>
<div class="b" style="left:602px;top:1624px;width:32px;height:32px;background:#dfb962;border-radius:6px;"></div>
<span class="t s" style="left:605.88px;top:1630.04px;font-size:19px;line-height:21px;color:#fff;font-weight:700;letter-spacing:1.770px;">JS</span>
<span class="t s" style="left:650.71px;top:1565.50px;font-size:24.5px;line-height:27px;color:#3b79cc;letter-spacing:1.177px;-webkit-text-stroke:0.6px #3b79cc;">listviewLength</span>
<span class="t s" style="left:651.69px;top:1623.60px;font-size:24.5px;line-height:27px;color:#484848;letter-spacing:0.547px;-webkit-text-stroke:0.6px #484848;">saveChange</span>
<span class="t s" style="left:1237.42px;top:1425.70px;font-size:24px;line-height:27px;color:#222;letter-spacing:0.832px;-webkit-text-stroke:0.65px #222;">General</span>
<span class="t s" style="left:1358.40px;top:1425.70px;font-size:24px;line-height:27px;color:#999;letter-spacing:0.804px;-webkit-text-stroke:0.65px #999;">Response</span>
<span class="t s" style="left:1504.62px;top:1425.70px;font-size:24px;line-height:27px;color:#999;letter-spacing:1.230px;-webkit-text-stroke:0.65px #999;">Advanced</span>
<div class="b" style="left:1238px;top:1484px;width:90px;height:4px;background:#333;"></div>
<span class="t s" style="left:1973.97px;top:1422.90px;font-size:32px;line-height:36px;color:#333;letter-spacing:1.903px;-webkit-text-stroke:0.3px #333;">listviewLength</span>
<div class="b" style="left:2520px;top:1408px;width:60px;height:64px;background:#fff;border:2px solid #c8c8c8;border-radius:9px;box-sizing:border-box;"></div>
<div class="b" style="left:2538.0px;top:1437.2px;width:5.6px;height:5.6px;background:#8a8a8a;border-radius:3px;"></div>
<div class="b" style="left:2547.2px;top:1437.2px;width:5.6px;height:5.6px;background:#8a8a8a;border-radius:3px;"></div>
<div class="b" style="left:2556.3999999999996px;top:1437.2px;width:5.6px;height:5.6px;background:#8a8a8a;border-radius:3px;"></div>
<div class="b" style="left:2596px;top:1408px;width:144px;height:64px;background:#fff;border:2px solid #8db9ea;border-radius:9px;box-sizing:border-box;"></div>
<span class="t s" style="left:2621.11px;top:1425.70px;font-size:24.5px;line-height:27px;color:#4a8ad4;letter-spacing:0.598px;-webkit-text-stroke:1.15px #4a8ad4;">Preview</span>
<div class="b" style="left:2756px;top:1408px;width:116px;height:64px;background:#eef4fd;border-radius:9px;"></div>
<svg class="b" style="left:2779px;top:1429px;" width="17" height="22" viewBox="0 0 17 22"><path d="M2 1.2 L14.6 10.3 Q15.6 11 14.6 11.7 L2 20.8 Q0.8 21.4 0.8 20 V2 Q0.8 0.6 2 1.2Z" fill="#4a8ad4"/></svg>
<span class="t s" style="left:2801.81px;top:1425.70px;font-size:24.5px;line-height:27px;color:#4a8ad4;letter-spacing:0.811px;-webkit-text-stroke:1.15px #4a8ad4;">Run</span>
<svg class="b" style="left:2900px;top:1426px;" width="28" height="28" viewBox="0 0 28 28"><g fill="#666" stroke="#666" stroke-width="2.6" stroke-linecap="round"><path d="M16.5 11.5 L24 4M11.5 16.5 L4 24" fill="none"/><path d="M18 2.8H25.2V10Z M2.8 18V25.2H10Z" stroke-width="1.4" stroke-linejoin="round"/></g></svg>
<span class="t s" style="left:1237.03px;top:1537.70px;font-size:24px;line-height:27px;color:#333;letter-spacing:0.780px;-webkit-text-stroke:0.7px #333;">Resource</span>
<div class="b" style="left:1370.5px;top:1521px;width:1569.5px;height:62.4px;background:#fff;border:2px solid #d6d6d6;border-radius:9px;box-sizing:border-box;"></div>
<div class="b" style="left:1400px;top:1538px;width:30px;height:30px;background:#dfb962;border-radius:6px;"></div>
<span class="t s" style="left:1403.63px;top:1543.60px;font-size:18px;line-height:20px;color:#fff;font-weight:700;letter-spacing:1.440px;">JS</span>
<span class="t s" style="left:1444.84px;top:1537.70px;font-size:24.5px;line-height:27px;color:#444;letter-spacing:0.504px;">Run JS Code (javascript)</span>
<svg class="b" style="left:2907px;top:1547.5px;" width="16" height="11" viewBox="0 0 16 11"><path d="M2.4 2.6 L8 8 L13.6 2.6" fill="none" stroke="#8c8c8c" stroke-width="2.6" stroke-linecap="round" stroke-linejoin="round"/></svg>
<div class="b" style="left:1238.3px;top:1608.9px;width:1701.7px;height:62.4px;background:#f4f4f4;border:2px solid #d6d6d6;border-radius:9px;box-sizing:border-box;"></div>
<span class="t s" style="left:1260.48px;top:1625.60px;font-size:24px;line-height:27px;color:#b5b5b5;letter-spacing:0.921px;">Run query only when manually triggered</span>
<svg class="b" style="left:2907px;top:1636px;" width="16" height="11" viewBox="0 0 16 11"><path d="M2.4 2.6 L8 8 L13.6 2.6" fill="none" stroke="#8c8c8c" stroke-width="2.6" stroke-linecap="round" stroke-linejoin="round"/></svg>
<div class="b" style="left:1238px;top:1701.5px;width:1702px;height:2px;background:#ececec;"></div>
<div class="b" style="left:1236.5px;top:1734.3px;width:1705px;height:270px;background:#fcfcfc;border:2px solid #dddddd;border-radius:9px;box-sizing:border-box;overflow:hidden;"><div class="b" style="left:0;top:0;width:75.5px;height:270px;background:#f4f4f4"></div></div>
<span class="t m" style="left:1283.20px;top:1757.40px;font-size:22px;line-height:25px;color:#8a9ab1;">1</span>
<span class="t m" style="left:1329.5px;top:1757.40px;font-size:22px;line-height:25px;white-space:pre"><span style="color:#5c69c5;font-weight:700;">var</span><span style="color:#333;"> startLength </span><span style="color:#e8692c;">=</span><span style="color:#333;"> </span><span style="color:#e8692c;">1</span><span style="color:#333;"> </span><span style="color:#8c9cb3;">// change to list of data if you are pre-filling the lsitview with items from something</span></span>
<span class="t m" style="left:1283.20px;top:1789.35px;font-size:22px;line-height:25px;color:#8a9ab1;">2</span>
<span class="t m" style="left:1329.5px;top:1789.35px;font-size:22px;line-height:25px;white-space:pre"><span style="color:#5c69c5;font-weight:700;">if</span><span style="color:#333;">( triggeredById </span><span style="color:#e8692c;">==</span><span style="color:#333;"> </span><span style="color:#555;">"</span><span style="color:#3f9470;">addRow</span><span style="color:#555;">"</span><span style="color:#333;">){</span></span>
<span class="t m" style="left:1283.20px;top:1821.30px;font-size:22px;line-height:25px;color:#8a9ab1;">3</span>
<span class="t m" style="left:1329.5px;top:1821.30px;font-size:22px;line-height:25px;white-space:pre"><span style="color:#5c69c5;font-weight:700;">return</span><span style="color:#333;"> </span><span style="color:#333;text-decoration:underline;text-decoration-thickness:2px;text-underline-offset:4px;">listviewLength</span><span style="color:#333;">.</span><span style="color:#1f58b6;">data</span><span style="color:#333;"> </span><span style="color:#e8692c;">+=</span><span style="color:#333;"> </span><span style="color:#e8692c;">1</span></span>
<span class="t m" style="left:1283.20px;top:1853.25px;font-size:22px;line-height:25px;color:#8a9ab1;">4</span>
<span class="t m" style="left:1329.5px;top:1853.25px;font-size:22px;line-height:25px;white-space:pre"><span style="color:#333;">} </span><span style="color:#5c69c5;font-weight:700;">else</span><span style="color:#333;"> </span><span style="color:#5c69c5;font-weight:700;">if</span><span style="color:#333;"> (triggeredById </span><span style="color:#e8692c;">==</span><span style="color:#333;"> </span><span style="color:#555;">"</span><span style="color:#3f9470;">removeRow</span><span style="color:#555;">"</span><span style="color:#333;"> ){</span></span>
<span class="t m" style="left:1283.20px;top:1885.20px;font-size:22px;line-height:25px;color:#8a9ab1;">5</span>
<span class="t m" style="left:1329.5px;top:1885.20px;font-size:22px;line-height:25px;white-space:pre"><span style="color:#333;">  </span><span style="color:#5c69c5;font-weight:700;">return</span><span style="color:#333;"> </span><span style="color:#333;text-decoration:underline;text-decoration-thickness:2px;text-underline-offset:4px;">listviewLength</span><span style="color:#333;">.</span><span style="color:#1f58b6;">data</span><span style="color:#333;"> </span><span style="color:#e8692c;">+=</span><span style="color:#333;"> </span><span style="color:#e8692c;">-1</span></span>
<span class="t m" style="left:1283.20px;top:1917.15px;font-size:22px;line-height:25px;color:#8a9ab1;">6</span>
<span class="t m" style="left:1329.5px;top:1917.15px;font-size:22px;line-height:25px;white-space:pre"><span style="color:#333;">} </span><span style="color:#5c69c5;font-weight:700;">else</span><span style="color:#333;">{</span></span>
<span class="t m" style="left:1283.20px;top:1949.10px;font-size:22px;line-height:25px;color:#8a9ab1;">7</span>
<span class="t m" style="left:1329.5px;top:1949.10px;font-size:22px;line-height:25px;white-space:pre"><span style="color:#333;">  </span><span style="color:#5c69c5;font-weight:700;">return</span><span style="color:#333;"> startLength</span></span>
<span class="t m" style="left:1283.20px;top:1981.05px;font-size:22px;line-height:25px;color:#8a9ab1;">8</span>
<span class="t m" style="left:1329.5px;top:1981.05px;font-size:22px;line-height:25px;white-space:pre"><span style="color:#333;">}</span></span>
</body></html>
